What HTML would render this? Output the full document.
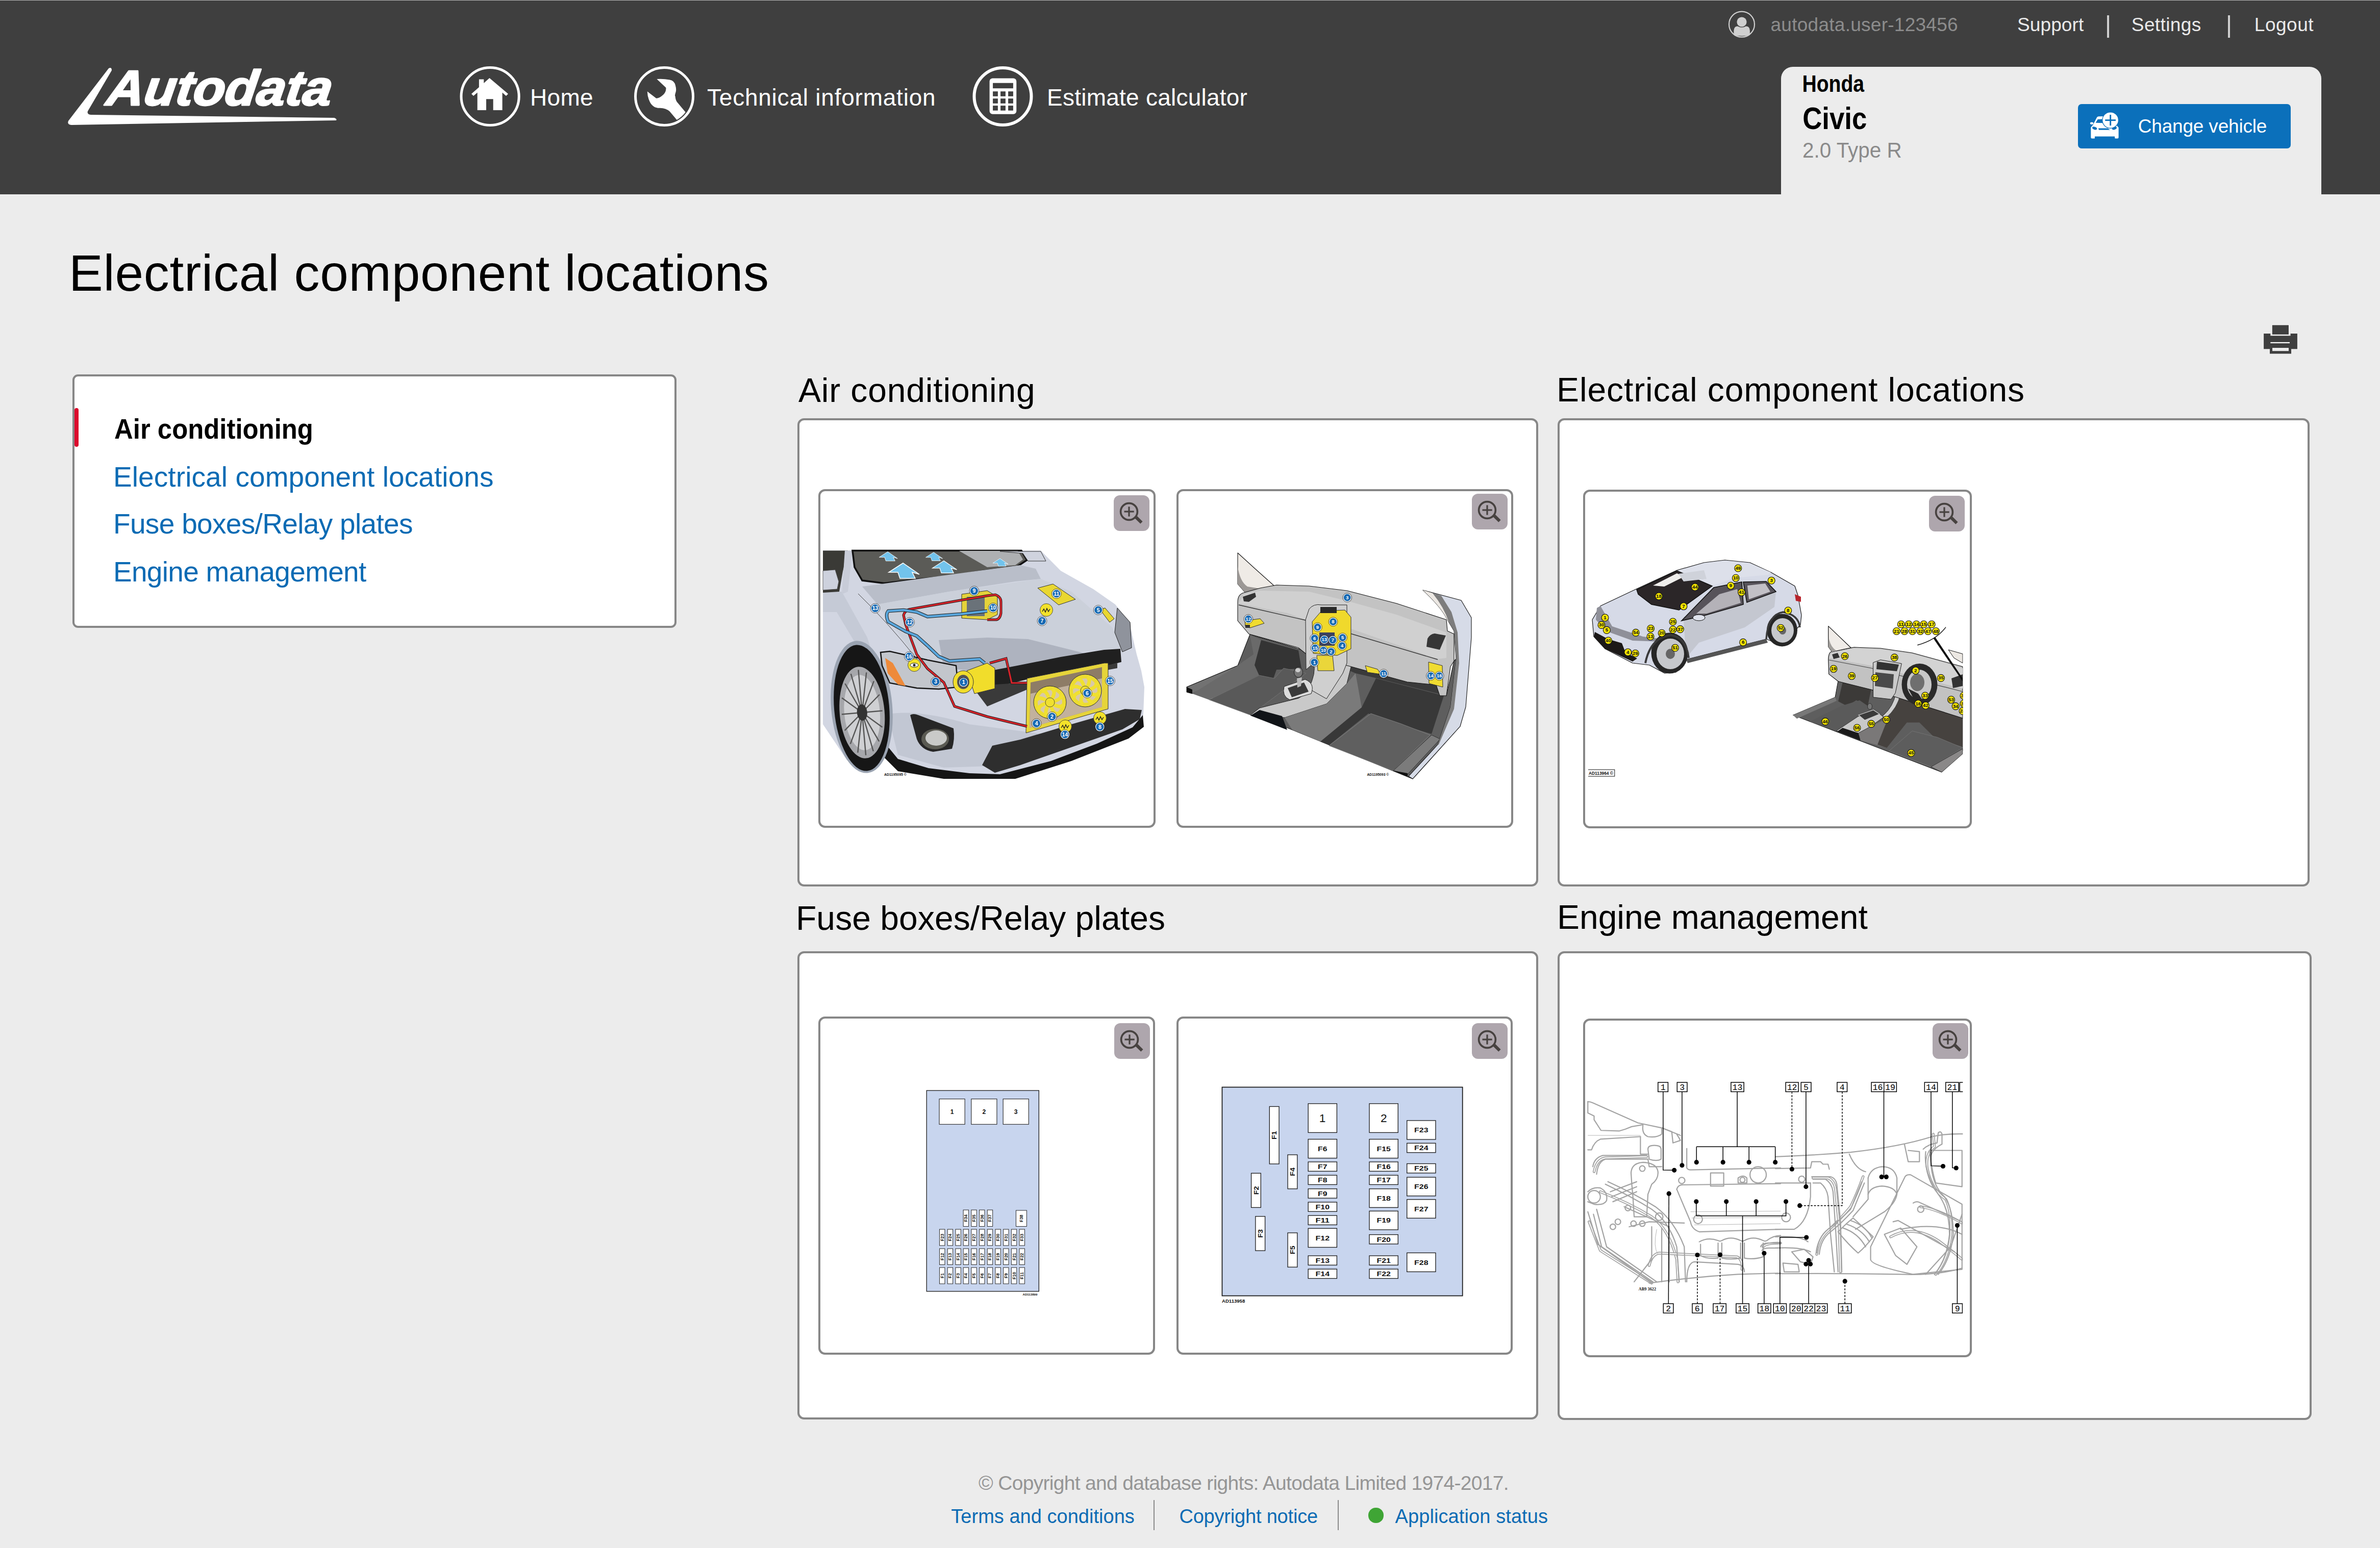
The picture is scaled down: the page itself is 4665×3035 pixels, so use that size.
<!DOCTYPE html>
<html><head><meta charset="utf-8"><title>Electrical component locations - Autodata</title>
<style>
html,body{margin:0;padding:0;}
body{width:4665px;height:3035px;position:relative;overflow:hidden;background:#ececec;font-family:"Liberation Sans",sans-serif;}
.t{position:absolute;white-space:nowrap;line-height:1;}
.abs{position:absolute;}
header{position:absolute;left:0;top:0;width:4665px;height:381px;background:#3f3f3f;border-top:1px solid #b8b8b8;box-sizing:border-box;}
.frm{position:absolute;box-sizing:border-box;border:4.5px solid #878787;border-radius:13px;background:#fff;}
.card{position:absolute;box-sizing:border-box;border:4.5px solid #878787;border-radius:13px;background:#fff;}
.zb{position:absolute;width:70px;height:70px;border-radius:12px;background:#aea6ad;}
.zb svg{display:block}
</style></head><body>
<header></header>
<svg class="abs" style="left:0;top:0" width="700" height="260" viewBox="0 0 700 260">
<path d="M213 134 Q219 131 219 138 L172 218 Q170 224 178 225 L655 231 Q661 233 659 236 L140 245 Q131 244 134 237 Z" fill="#fff"/>
<text x="206" y="206" font-family="Liberation Sans" font-weight="700" font-style="italic" font-size="97" fill="#fff" stroke="#fff" stroke-width="3" stroke-linejoin="round" transform="translate(206 206) skewX(-8) scale(1.05 1) translate(-206 -206)">Autodata</text>
</svg>
<svg class="abs" style="left:880px;top:110px" width="1200" height="160" viewBox="880 110 1200 160">
<circle cx="960.6" cy="189" r="56.6" fill="none" stroke="#fff" stroke-width="5"/>
<path d="M959.4 153 L996 184 L992 188 L984.6 181.5 L984.6 216 L966.7 216 L966.7 194.2 L953 194.2 L953 216 L935.7 216 L935.7 181.5 L928 188 L924 184 L938.9 171 L938.9 155.6 L948.3 155.6 L948.3 163 Z" fill="#fff"/>
<circle cx="1302" cy="189" r="56.5" fill="none" stroke="#fff" stroke-width="5"/>
<path d="M1287.4 155 Q1300 154 1312.7 156.5 Q1322 158 1324 168 Q1326 175 1324.6 180.3 Q1322 188 1323.5 188.5 Q1324 196 1327 200 L1343.7 220 Q1337 229 1326.6 235 L1312.7 218.5 Q1305 212 1294 211.8 Q1286 212 1281.7 209 Q1276 205 1273.4 199 Q1269 190 1268.8 179.2 L1286.3 192.7 Q1292 193 1300.3 185.4 Q1306 180 1305.4 172 Z" fill="#fff"/>
<circle cx="1965.5" cy="189" r="56" fill="none" stroke="#fff" stroke-width="6"/>
<rect x="1939.6" y="153.4" width="52.7" height="70.3" rx="6" fill="#fff"/>
<rect x="1946.1" y="162.7" width="39.8" height="10.5" fill="#3f3f3f"/>
<rect x="1946.1" y="179.2" width="9.8" height="9.6" fill="#3f3f3f"/><rect x="1946.1" y="193.2" width="9.8" height="9.6" fill="#3f3f3f"/><rect x="1946.1" y="207.1" width="9.8" height="9.6" fill="#3f3f3f"/><rect x="1961.1" y="179.2" width="9.8" height="9.6" fill="#3f3f3f"/><rect x="1961.1" y="193.2" width="9.8" height="9.6" fill="#3f3f3f"/><rect x="1961.1" y="207.1" width="9.8" height="9.6" fill="#3f3f3f"/><rect x="1976.1" y="179.2" width="9.8" height="9.6" fill="#3f3f3f"/><rect x="1976.1" y="193.2" width="9.8" height="9.6" fill="#3f3f3f"/><rect x="1976.1" y="207.1" width="9.8" height="9.6" fill="#3f3f3f"/>
</svg>
<svg class="abs" style="left:3380px;top:15px" width="70" height="70" viewBox="3380 15 70 70">
<circle cx="3414" cy="47.7" r="25" fill="none" stroke="#cfcfcf" stroke-width="2.2"/>
<circle cx="3414" cy="43" r="9.6" fill="#cfcfcf"/>
<path d="M3398.4 68.8 L3398.4 60 Q3399 51 3406 51.5 Q3414 56 3422 51.5 Q3429.5 51 3429.9 60 L3429.9 68.8 Q3414 72 3398.4 68.8 Z" fill="#cfcfcf"/>
</svg>
<div class="abs" style="left:4130px;top:30px;width:4px;height:44px;background:#cfcfcf"></div>
<div class="abs" style="left:4367px;top:30px;width:4px;height:44px;background:#cfcfcf"></div>
<div class="abs" style="left:3491px;top:131px;width:1059px;height:250px;background:#ececec;border-radius:23px 23px 0 0"></div>
<div class="abs" style="left:4072.5px;top:204.4px;width:417.8px;height:86.9px;background:#0b70bb;border-radius:7px"></div>
<svg class="abs" style="left:4090px;top:215px" width="70" height="62" viewBox="4090 215 70 62">
<path d="M4098.3 250 L4102.6 244.4 L4110.3 229.8 Q4111.5 228.3 4113.5 228.3 L4124 228 L4140 240 L4149.2 246.2 L4152.6 250 L4152.6 269.5 Q4152.6 271.5 4150.5 271.5 L4145.5 271.5 L4145 267.4 L4106 267.4 L4105.8 271.5 L4100.3 271.5 Q4098.3 271.5 4098.3 269.5 Z" fill="#fff"/>
<ellipse cx="4100" cy="241.7" rx="3.2" ry="2.2" fill="#fff"/>
<path d="M4107.6 240.8 L4111.7 234 L4123 233.5 L4123 241.2 Z" fill="#0b70bb"/>
<ellipse cx="4105.6" cy="251.4" rx="4.8" ry="2.7" transform="rotate(20 4105.6 251.4)" fill="#0b70bb"/>
<ellipse cx="4144.4" cy="251.4" rx="4.8" ry="2.7" transform="rotate(-20 4144.4 251.4)" fill="#0b70bb"/>
<path d="M4113 251.6 L4131 251.6 L4136 254.8 L4114 254.8 Z" fill="#0b70bb"/>
<circle cx="4136.6" cy="235.6" r="16.4" fill="#0b70bb"/>
<circle cx="4136.6" cy="235.6" r="15.2" fill="#fff"/>
<rect x="4126.2" y="234.2" width="20.8" height="2.9" fill="#0b70bb"/><rect x="4135.2" y="225" width="2.9" height="21.2" fill="#0b70bb"/>
</svg>
<svg class="abs" style="left:4430px;top:630px" width="80" height="70" viewBox="4430 630 80 70">
<rect x="4452.7" y="636.4" width="34.3" height="20.4" fill="#fff"/>
<rect x="4453.7" y="637.4" width="32.3" height="18.4" fill="#3f3f3f"/>
<path d="M4437.1 653.9 L4450.3 653.9 L4450.3 658.3 L4489.6 658.3 L4489.6 653.9 L4502.9 653.9 L4502.9 684.3 L4491 684.3 L4491 693.5 L4449 693.5 L4449 684.3 L4437.1 684.3 Z" fill="#3f3f3f"/>
<rect x="4450.3" y="670.8" width="37.7" height="2.2" fill="#fff"/>
<rect x="4454" y="682" width="32" height="6.2" fill="#ececec"/>
</svg>
<aside class="abs" style="left:142px;top:734.4px;width:1184px;height:497px;box-sizing:border-box;border:4px solid #878787;border-radius:11px;background:#fff"></aside>
<div class="abs" style="left:145.6px;top:799.5px;width:8.7px;height:76.8px;background:#dc0a2d;border-radius:4.5px"></div>
<section class="card" style="left:1563px;top:820.3px;width:1452.0px;height:917.7px"></section>
<section class="card" style="left:3053px;top:820.3px;width:1474.0px;height:918.2px"></section>
<section class="card" style="left:1563px;top:1865px;width:1451.5px;height:918.2px"></section>
<section class="card" style="left:3053px;top:1865px;width:1477.5px;height:919.2px"></section>
<div class="frm" style="left:1604.2px;top:959.3px;width:660.5px;height:663.5px"></div>
<svg class="abs" style="left:1600px;top:955px" width="670" height="675" viewBox="1600 955 670 675"><defs><clipPath id="c1600_955"><rect x="1609" y="964" width="651" height="654"/></clipPath></defs><g clip-path="url(#c1600_955)"><path d="M1613 1079.6 L2040 1079.6 L2079 1119 L2143 1155 L2186 1185 L2213 1219 L2228 1283 L2237 1315 L2243 1347 L2241 1400 L2238 1420 L2210 1445 L2100 1490 L1990 1526 L1850 1526 L1760 1510 L1733 1480 L1700 1500 L1660 1490 L1613 1420 Z" fill="#d2d6e2"/><path d="M1740 1400 Q1800 1390 1900 1420 L2050 1440 L2000 1500 L1850 1505 L1760 1480 Z" fill="#c2c7d3"/><path d="M1613 1160 L1650 1160 L1700 1250 L1740 1380 L1733 1460 L1700 1300 L1640 1200 L1613 1200 Z" fill="#c5cad6"/><path d="M1613 1079.6 L1662 1079.6 L1652 1120 L1645 1160 L1613 1162 Z" fill="#3a3a36"/><path d="M1613 1119 L1637 1117 L1644 1140 L1641 1155 L1613 1157 Z" fill="#cdd1dd" stroke="#444" stroke-width="0.8"/><path d="M1656 1079.6 L1671 1079.6 L1662 1160 L1650 1165 Z" fill="#c8ccd8"/><path d="M1671 1079.6 L2002 1079.6 L2013 1098 L1994 1110.5 L1930 1119 L1861 1129.7 L1797 1136 L1733 1143.5 L1690 1138 L1675 1112 Z" fill="#5b5b57" stroke="#111" stroke-width="3.5"/><path d="M1880 1080 L1995 1080 L2005 1097 L1990 1108 L1935 1112 Z" fill="#aeb0b2"/><path d="M1960 1081 L2040 1081 L2050 1100 L2015 1100 L2005 1085 Z" fill="#cfd3de" stroke="#333" stroke-width="1"/><path transform="translate(1770 1106) scale(1.0)" d="M0 -2 L-28 16 L-10 16 L-6 28 L24 28 L18 16 L32 20 Z" fill="#72c3ec" stroke="#fff" stroke-width="1.5"/><path transform="translate(1740 1083) scale(0.6)" d="M0 -2 L-28 16 L-10 16 L-6 28 L24 28 L18 16 L32 20 Z" fill="#72c3ec" stroke="#fff" stroke-width="1.5"/><path transform="translate(1830 1084) scale(0.55)" d="M0 -2 L-28 16 L-10 16 L-6 28 L24 28 L18 16 L32 20 Z" fill="#72c3ec" stroke="#fff" stroke-width="1.5"/><path transform="translate(1850 1101) scale(0.8)" d="M0 -2 L-28 16 L-10 16 L-6 28 L24 28 L18 16 L32 20 Z" fill="#72c3ec" stroke="#fff" stroke-width="1.5"/><path transform="translate(1960 1096) scale(0.5)" d="M0 -2 L-28 16 L-10 16 L-6 28 L24 28 L18 16 L32 20 Z" fill="#72c3ec" stroke="#fff" stroke-width="1.5"/><path d="M1690 1150 L2000 1108 L2030 1115 L2040 1135 L1990 1140 L1860 1160 L1720 1185 Z" fill="#b9bec9"/><path d="M1720 1185 L1860 1160 L2040 1135 L2100 1160 L2180 1230 L2200 1270 L2100 1280 L2000 1300 L1900 1300 L1800 1295 Z" fill="#cbd0da"/><path d="M1840 1255 L1935 1250 L2015 1253 L2143 1285 L2080 1300 L1960 1320 L1850 1310 Z" fill="#aeb3bf"/><path d="M2190 1192 L2215 1220 L2218 1270 L2200 1278 L2185 1240 Z" fill="#8f939c" stroke="#222" stroke-width="1"/><path d="M1905 1322 L1994 1305 L2079 1288 L2164 1274 L2196 1272 L2198 1298 L2171 1305 L2079 1318 L2013 1332 L1940 1350 L1905 1345 Z" fill="#202020"/><path d="M1905 1345 L2013 1338 L2100 1320 L2190 1300 L2190 1310 L2080 1330 L2013 1352 L1935 1385 Z" fill="#3a3a3a"/><path d="M1925 1500 L1945 1462 L2000 1450 L2100 1420 L2205 1390 L2238 1392 L2234 1410 L2200 1430 L2100 1465 L2000 1500 L1950 1515 Z" fill="#2e2e2e"/><path d="M1733 1455 L1760 1488 L1820 1506 L1900 1516 L1960 1518 L2060 1492 L2150 1458 L2220 1426 L2240 1402 L2242 1425 L2212 1448 L2100 1492 L1990 1527 L1850 1527 L1760 1512 L1728 1480 Z" fill="#151515"/><path d="M1784 1402 Q1790 1398 1800 1402 L1869 1428 Q1872 1450 1866 1468 L1829 1474 Q1805 1470 1797 1449 Z" fill="#262626"/><ellipse cx="1833" cy="1449" rx="27" ry="20" fill="#5a5a52"/><ellipse cx="1835" cy="1447" rx="21" ry="15" fill="#c9cac8"/><ellipse cx="1689" cy="1386" rx="60" ry="130" transform="rotate(-5 1689 1386)" fill="#9aa3b1"/><g transform="rotate(-5 1689 1388)"><ellipse cx="1689" cy="1388" rx="54" ry="124" fill="#161616"/><ellipse cx="1689" cy="1397" rx="44" ry="90" fill="#a6a7ab"/><ellipse cx="1689" cy="1397" rx="35" ry="74" fill="#cfd0d3"/><line x1="1689" y1="1397" x2="1729.0" y2="1397.0" stroke="#555" stroke-width="2.4"/><line x1="1689" y1="1397" x2="1726.0" y2="1429.1" stroke="#555" stroke-width="2.4"/><line x1="1689" y1="1397" x2="1717.3" y2="1456.4" stroke="#555" stroke-width="2.4"/><line x1="1689" y1="1397" x2="1704.3" y2="1474.6" stroke="#555" stroke-width="2.4"/><line x1="1689" y1="1397" x2="1689.0" y2="1481.0" stroke="#555" stroke-width="2.4"/><line x1="1689" y1="1397" x2="1673.7" y2="1474.6" stroke="#555" stroke-width="2.4"/><line x1="1689" y1="1397" x2="1660.7" y2="1456.4" stroke="#555" stroke-width="2.4"/><line x1="1689" y1="1397" x2="1652.0" y2="1429.1" stroke="#555" stroke-width="2.4"/><line x1="1689" y1="1397" x2="1649.0" y2="1397.0" stroke="#555" stroke-width="2.4"/><line x1="1689" y1="1397" x2="1652.0" y2="1364.9" stroke="#555" stroke-width="2.4"/><line x1="1689" y1="1397" x2="1660.7" y2="1337.6" stroke="#555" stroke-width="2.4"/><line x1="1689" y1="1397" x2="1673.7" y2="1319.4" stroke="#555" stroke-width="2.4"/><line x1="1689" y1="1397" x2="1689.0" y2="1313.0" stroke="#555" stroke-width="2.4"/><line x1="1689" y1="1397" x2="1704.3" y2="1319.4" stroke="#555" stroke-width="2.4"/><line x1="1689" y1="1397" x2="1717.3" y2="1337.6" stroke="#555" stroke-width="2.4"/><line x1="1689" y1="1397" x2="1726.0" y2="1364.9" stroke="#555" stroke-width="2.4"/><ellipse cx="1689" cy="1397" rx="10" ry="16" fill="#333"/></g><path d="M1726 1279 L1744 1277 L1818 1294 L1874 1305 L1878 1347 L1840 1351 L1797 1349 L1744 1339 L1729 1305 Z" fill="#c3c6cc" stroke="#161616" stroke-width="2.5"/><path d="M1735 1290 L1750 1300 L1775 1345 L1760 1342 L1740 1320 Z" fill="#ee8a3a"/><path d="M1682 1164 Q1740 1220 1797 1292" fill="none" stroke="#444" stroke-width="1"/><path d="M2013 1330 L2164.5 1300 L2172 1300 L2172 1390 L2164.5 1392 L2011 1437 Z" fill="#e6d43a" stroke="#333" stroke-width="1"/><path d="M2020 1338 L2160 1308 L2160 1386 L2018 1427 Z" fill="#8e7c66"/><path d="M2020 1360 L2160 1330 L2160 1386 L2018 1427 Z" fill="#d9c7b5" opacity="0.7"/><circle cx="2058" cy="1377" r="32" fill="#ecdc30" stroke="#333" stroke-width="1"/><circle cx="2058" cy="1377" r="24" fill="#d8c9a8"/><path d="M2058 1377 Q2072 1355 2062 1351" transform="rotate(0 2058 1377)" fill="none" stroke="#f0e030" stroke-width="7"/><path d="M2058 1377 Q2072 1355 2062 1351" transform="rotate(45 2058 1377)" fill="none" stroke="#f0e030" stroke-width="7"/><path d="M2058 1377 Q2072 1355 2062 1351" transform="rotate(90 2058 1377)" fill="none" stroke="#f0e030" stroke-width="7"/><path d="M2058 1377 Q2072 1355 2062 1351" transform="rotate(135 2058 1377)" fill="none" stroke="#f0e030" stroke-width="7"/><path d="M2058 1377 Q2072 1355 2062 1351" transform="rotate(180 2058 1377)" fill="none" stroke="#f0e030" stroke-width="7"/><path d="M2058 1377 Q2072 1355 2062 1351" transform="rotate(225 2058 1377)" fill="none" stroke="#f0e030" stroke-width="7"/><path d="M2058 1377 Q2072 1355 2062 1351" transform="rotate(270 2058 1377)" fill="none" stroke="#f0e030" stroke-width="7"/><path d="M2058 1377 Q2072 1355 2062 1351" transform="rotate(315 2058 1377)" fill="none" stroke="#f0e030" stroke-width="7"/><circle cx="2058" cy="1377" r="9" fill="#f0e030" stroke="#333" stroke-width="0.8"/><circle cx="2127" cy="1354" r="32" fill="#ecdc30" stroke="#333" stroke-width="1"/><circle cx="2127" cy="1354" r="24" fill="#d8c9a8"/><path d="M2127 1354 Q2141 1332 2131 1328" transform="rotate(0 2127 1354)" fill="none" stroke="#f0e030" stroke-width="7"/><path d="M2127 1354 Q2141 1332 2131 1328" transform="rotate(45 2127 1354)" fill="none" stroke="#f0e030" stroke-width="7"/><path d="M2127 1354 Q2141 1332 2131 1328" transform="rotate(90 2127 1354)" fill="none" stroke="#f0e030" stroke-width="7"/><path d="M2127 1354 Q2141 1332 2131 1328" transform="rotate(135 2127 1354)" fill="none" stroke="#f0e030" stroke-width="7"/><path d="M2127 1354 Q2141 1332 2131 1328" transform="rotate(180 2127 1354)" fill="none" stroke="#f0e030" stroke-width="7"/><path d="M2127 1354 Q2141 1332 2131 1328" transform="rotate(225 2127 1354)" fill="none" stroke="#f0e030" stroke-width="7"/><path d="M2127 1354 Q2141 1332 2131 1328" transform="rotate(270 2127 1354)" fill="none" stroke="#f0e030" stroke-width="7"/><path d="M2127 1354 Q2141 1332 2131 1328" transform="rotate(315 2127 1354)" fill="none" stroke="#f0e030" stroke-width="7"/><circle cx="2127" cy="1354" r="9" fill="#f0e030" stroke="#333" stroke-width="0.8"/><path d="M1895 1315 L1935 1300 L1950 1310 L1950 1350 L1910 1360 Z" fill="#f1dd2b" stroke="#333" stroke-width="1"/><ellipse cx="1888" cy="1337" rx="20" ry="22" fill="#f1dd2b" stroke="#333" stroke-width="1"/><ellipse cx="1888" cy="1337" rx="12" ry="14" fill="#555"/><path d="M1885 1165 L1935 1158 L1955 1170 L1955 1205 L1935 1215 L1885 1212 Z" fill="#e4d23a" stroke="#333" stroke-width="1"/><rect x="1895" y="1170" width="35" height="38" fill="#4b5a8a" opacity="0.8"/><path d="M2034 1153 L2064 1145 L2108 1175 L2075 1186 Z" fill="#e9d731" stroke="#333" stroke-width="1"/><path d="M2156 1195 L2166 1192 L2184 1213 L2175 1220 Z" fill="#e9d731" stroke="#333" stroke-width="1"/><path d="M2013 1424 L1935 1405 L1871 1385 L1850 1338 L1818 1311 L1797 1283 L1775 1224 L1771 1206 Q1775 1195 1786 1194 L1882 1177 L1935 1168 L1951 1166 Q1962 1170 1962 1180 L1962 1202 Q1960 1215 1951 1215 L1935 1215" fill="none" stroke="#1a1a1a" stroke-width="5"/><path d="M2013 1424 L1935 1405 L1871 1385 L1850 1338 L1818 1311 L1797 1283 L1775 1224 L1771 1206 Q1775 1195 1786 1194 L1882 1177 L1935 1168 L1951 1166 Q1962 1170 1962 1180 L1962 1202 Q1960 1215 1951 1215 L1935 1215" fill="none" stroke="#d9232a" stroke-width="3.2"/><path d="M1940 1300 L1972 1291 L1983 1339 L2013 1339" fill="none" stroke="#1a1a1a" stroke-width="5"/><path d="M1940 1300 L1972 1291 L1983 1339 L2013 1339" fill="none" stroke="#d9232a" stroke-width="3.2"/><path d="M1935 1198 L1882 1204 L1818 1209 L1797 1200 L1771 1196 L1741 1198 Q1735 1205 1741 1219 L1775 1238 L1797 1247 L1818 1266 L1840 1287 L1861 1296 L1920 1292 L1930 1300" fill="none" stroke="#1a1a1a" stroke-width="6.5"/><path d="M1935 1198 L1882 1204 L1818 1209 L1797 1200 L1771 1196 L1741 1198 Q1735 1205 1741 1219 L1775 1238 L1797 1247 L1818 1266 L1840 1287 L1861 1296 L1920 1292 L1930 1300" fill="none" stroke="#5aa7dd" stroke-width="4.5"/><circle cx="2051" cy="1196" r="12.5" fill="#f3e22a" stroke="#333" stroke-width="0.8"/><path d="M2043 1199 l3 -5 l3 6 l3 -7 l3 6 l3 -5" fill="none" stroke="#222" stroke-width="1.4"/><circle cx="2088" cy="1424" r="12.5" fill="#f3e22a" stroke="#333" stroke-width="0.8"/><path d="M2080 1427 l3 -5 l3 6 l3 -7 l3 6 l3 -5" fill="none" stroke="#222" stroke-width="1.4"/><circle cx="2156" cy="1408" r="12.5" fill="#f3e22a" stroke="#333" stroke-width="0.8"/><path d="M2148 1411 l3 -5 l3 6 l3 -7 l3 6 l3 -5" fill="none" stroke="#222" stroke-width="1.4"/><circle cx="1792" cy="1304" r="12.5" fill="#f3e22a" stroke="#333" stroke-width="0.8"/><ellipse cx="1792" cy="1304" rx="8" ry="4" fill="#fff" stroke="#222" stroke-width="1"/><circle cx="1792" cy="1304" r="2.5" fill="#222"/><circle cx="1909.5" cy="1158.6" r="8.2" fill="#1769b3" stroke="#fff" stroke-width="1.2"/><circle cx="1909.5" cy="1158.6" r="9.399999999999999" fill="none" stroke="#222" stroke-width="0.7"/><text x="1909.5" y="1162.3799999999999" text-anchor="middle" font-family="Liberation Sans" font-weight="700" font-size="10.5" fill="#fff">9</text><circle cx="1946.6" cy="1191.7" r="8.2" fill="#1769b3" stroke="#fff" stroke-width="1.2"/><circle cx="1946.6" cy="1191.7" r="9.399999999999999" fill="none" stroke="#222" stroke-width="0.7"/><text x="1946.6" y="1195.48" text-anchor="middle" font-family="Liberation Sans" font-weight="700" font-size="10.5" fill="#fff">10</text><circle cx="2070.8" cy="1164" r="8.2" fill="#1769b3" stroke="#fff" stroke-width="1.2"/><circle cx="2070.8" cy="1164" r="9.399999999999999" fill="none" stroke="#222" stroke-width="0.7"/><text x="2070.8" y="1167.78" text-anchor="middle" font-family="Liberation Sans" font-weight="700" font-size="10.5" fill="#fff">11</text><circle cx="1715.5" cy="1192.6" r="8.2" fill="#1769b3" stroke="#fff" stroke-width="1.2"/><circle cx="1715.5" cy="1192.6" r="9.399999999999999" fill="none" stroke="#222" stroke-width="0.7"/><text x="1715.5" y="1196.3799999999999" text-anchor="middle" font-family="Liberation Sans" font-weight="700" font-size="10.5" fill="#fff">13</text><circle cx="1783" cy="1220" r="8.2" fill="#1769b3" stroke="#fff" stroke-width="1.2"/><circle cx="1783" cy="1220" r="9.399999999999999" fill="none" stroke="#222" stroke-width="0.7"/><text x="1783" y="1223.78" text-anchor="middle" font-family="Liberation Sans" font-weight="700" font-size="10.5" fill="#fff">12</text><circle cx="2042.5" cy="1217.4" r="8.2" fill="#1769b3" stroke="#fff" stroke-width="1.2"/><circle cx="2042.5" cy="1217.4" r="9.399999999999999" fill="none" stroke="#222" stroke-width="0.7"/><text x="2042.5" y="1221.18" text-anchor="middle" font-family="Liberation Sans" font-weight="700" font-size="10.5" fill="#fff">7</text><circle cx="2152.7" cy="1196" r="8.2" fill="#1769b3" stroke="#fff" stroke-width="1.2"/><circle cx="2152.7" cy="1196" r="9.399999999999999" fill="none" stroke="#222" stroke-width="0.7"/><text x="2152.7" y="1199.78" text-anchor="middle" font-family="Liberation Sans" font-weight="700" font-size="10.5" fill="#fff">5</text><circle cx="1782" cy="1287" r="8.2" fill="#1769b3" stroke="#fff" stroke-width="1.2"/><circle cx="1782" cy="1287" r="9.399999999999999" fill="none" stroke="#222" stroke-width="0.7"/><text x="1782" y="1290.78" text-anchor="middle" font-family="Liberation Sans" font-weight="700" font-size="10.5" fill="#fff">16</text><circle cx="1834" cy="1336.4" r="8.2" fill="#1769b3" stroke="#fff" stroke-width="1.2"/><circle cx="1834" cy="1336.4" r="9.399999999999999" fill="none" stroke="#222" stroke-width="0.7"/><text x="1834" y="1340.18" text-anchor="middle" font-family="Liberation Sans" font-weight="700" font-size="10.5" fill="#fff">3</text><circle cx="1888.6" cy="1337.7" r="8.2" fill="#1769b3" stroke="#fff" stroke-width="1.2"/><circle cx="1888.6" cy="1337.7" r="9.399999999999999" fill="none" stroke="#222" stroke-width="0.7"/><text x="1888.6" y="1341.48" text-anchor="middle" font-family="Liberation Sans" font-weight="700" font-size="10.5" fill="#fff">1</text><circle cx="2176" cy="1335" r="8.2" fill="#1769b3" stroke="#fff" stroke-width="1.2"/><circle cx="2176" cy="1335" r="9.399999999999999" fill="none" stroke="#222" stroke-width="0.7"/><text x="2176" y="1338.78" text-anchor="middle" font-family="Liberation Sans" font-weight="700" font-size="10.5" fill="#fff">15</text><circle cx="2131" cy="1359" r="8.2" fill="#1769b3" stroke="#fff" stroke-width="1.2"/><circle cx="2131" cy="1359" r="9.399999999999999" fill="none" stroke="#222" stroke-width="0.7"/><text x="2131" y="1362.78" text-anchor="middle" font-family="Liberation Sans" font-weight="700" font-size="10.5" fill="#fff">6</text><circle cx="2062" cy="1405" r="8.2" fill="#1769b3" stroke="#fff" stroke-width="1.2"/><circle cx="2062" cy="1405" r="9.399999999999999" fill="none" stroke="#222" stroke-width="0.7"/><text x="2062" y="1408.78" text-anchor="middle" font-family="Liberation Sans" font-weight="700" font-size="10.5" fill="#fff">2</text><circle cx="2031.6" cy="1418.4" r="8.2" fill="#1769b3" stroke="#fff" stroke-width="1.2"/><circle cx="2031.6" cy="1418.4" r="9.399999999999999" fill="none" stroke="#222" stroke-width="0.7"/><text x="2031.6" y="1422.18" text-anchor="middle" font-family="Liberation Sans" font-weight="700" font-size="10.5" fill="#fff">4</text><circle cx="2087.4" cy="1440" r="8.2" fill="#1769b3" stroke="#fff" stroke-width="1.2"/><circle cx="2087.4" cy="1440" r="9.399999999999999" fill="none" stroke="#222" stroke-width="0.7"/><text x="2087.4" y="1443.78" text-anchor="middle" font-family="Liberation Sans" font-weight="700" font-size="10.5" fill="#fff">14</text><circle cx="2155.8" cy="1425" r="8.2" fill="#1769b3" stroke="#fff" stroke-width="1.2"/><circle cx="2155.8" cy="1425" r="9.399999999999999" fill="none" stroke="#222" stroke-width="0.7"/><text x="2155.8" y="1428.78" text-anchor="middle" font-family="Liberation Sans" font-weight="700" font-size="10.5" fill="#fff">8</text><text x="1733" y="1521" font-family="Liberation Sans" font-weight="700" font-size="6.5" fill="#111" textLength="44" lengthAdjust="spacingAndGlyphs">AD1195095 ©</text></g></svg>
<div class="frm" style="left:2305.6px;top:959.3px;width:660.2px;height:663.5px"></div>
<svg class="abs" style="left:2300px;top:955px" width="670" height="675" viewBox="2300 955 670 675"><defs><clipPath id="c2300_955"><rect x="2310" y="964" width="651" height="654"/></clipPath></defs><g clip-path="url(#c2300_955)"><path d="M2326 1347 L2426 1305 L2450 1244 L2545 1272 L2758 1337 L2815 1343 L2835 1364 L2850 1296 L2854 1292 L2862 1424 L2769 1527 Z" fill="#5e5e5e" stroke="#161616" stroke-width="1.1" stroke-linejoin="round"/><path d="M2545 1272 L2758 1337 L2815 1343 L2835 1364 L2700 1330 L2657 1320 Z" fill="#3a3a3a"/><path d="M2326 1347 L2426 1305 L2429 1314 L2337 1360 L2326 1357 Z" fill="#727272" stroke="#161616" stroke-width="1"/><path d="M2326 1347 L2337 1352 L2337 1360 L2326 1357 Z" fill="#111"/><path d="M2426 1305 L2438 1296 L2457 1283 L2450 1244 L2472 1255 L2500 1310 L2468 1323 L2370 1372 L2337 1360 Z" fill="#6a6a6a"/><path d="M2472 1255 L2545 1275 L2551 1311 L2502 1313 L2496 1330 L2468 1324 L2459 1304 Z" fill="#343434"/><path d="M2370 1372 L2468 1324 L2498 1330 L2516 1310 L2560 1320 L2451 1402 Z" fill="#595959" stroke="#777" stroke-width="0.8"/><path d="M2451 1402 L2469 1388 L2545 1369 L2617 1325 L2632 1300 L2650 1300 L2640 1340 L2600 1380 L2518 1407 Z" fill="#c9c9c9" stroke="#222" stroke-width="1"/><path d="M2451 1403 L2469 1392 L2513 1404 L2523 1431 Z" fill="#111418"/><path d="M2518 1407 L2600 1380 L2640 1340 L2657 1320 L2669 1387 L2588 1454 L2533 1431 Z" fill="#7a7a7a"/><path d="M2669 1387 L2697 1330 L2830 1364 L2806 1439 L2746 1421 L2682 1399 L2605 1461 L2588 1454 Z" fill="#383838"/><path d="M2605 1462 L2687 1399 L2746 1419 L2803 1441 L2731 1511 Z" fill="#5f5f5f" stroke="#888" stroke-width="0.8"/><path d="M2731 1511 L2806 1441 L2823 1449 L2759 1518 Z" fill="#7b7b7b" stroke="#222" stroke-width="0.8"/><path d="M2731 1511 L2759 1516 L2759 1522 L2769 1527 Z" fill="#111"/><path d="M2789 1157 L2864 1177 L2884 1211 L2884 1250 L2873 1386 L2862 1424 L2769 1527 L2761 1522 L2818 1460 L2843 1386 L2854 1292 L2850 1237 L2837 1215 Q2825 1190 2789 1157 Z" fill="#d6dbe7" stroke="#161616" stroke-width="1.1" stroke-linejoin="round"/><path d="M2789 1157 L2825 1168 L2845 1200 L2857 1240 L2860 1300 L2850 1390 L2820 1460 L2818 1460 L2843 1386 L2854 1292 L2850 1237 L2837 1215 Q2825 1190 2789 1157 Z" fill="#7d7d7d"/><path d="M2789 1157 L2808 1163 Q2830 1190 2840 1220 L2837 1215 Q2825 1190 2789 1157 Z" fill="#ece8e3"/><path d="M2426 1084 L2460 1115 L2498 1149 L2470 1155 L2440 1161 L2426 1145 Z" fill="#efebe6" stroke="#161616" stroke-width="1.1" stroke-linejoin="round"/><path d="M2426 1110 Q2430 1140 2445 1150 L2470 1154 L2440 1161 L2426 1145 Z" fill="#9c9895"/><path d="M2426 1181 Q2426 1165 2438 1162 L2470 1153 L2502 1147 L2566 1149 L2640 1158 L2737 1183 L2835 1215 L2837 1237 L2850 1243 L2850 1296 L2843 1307 L2835 1364 L2822 1364 L2815 1343 L2758 1337 L2641 1305 L2570 1290 L2545 1270 L2448 1243 L2426 1217 Z" fill="#c3c3c3" stroke="#161616" stroke-width="1.1" stroke-linejoin="round"/><path d="M2428 1183 L2523 1202 L2559 1215 L2640 1230 L2818 1292 L2835 1290 L2835 1240 L2737 1205 L2640 1178 L2566 1160 L2470 1158 L2438 1165 Z" fill="#d0d0d0"/><path d="M2428 1186 L2559 1216 L2818 1293" fill="none" stroke="#333" stroke-width="1.4"/><path d="M2436 1170 L2460 1162 L2462 1170 L2448 1180 L2438 1179 Z" fill="#333"/><path d="M2798 1252 Q2803 1243 2812 1242 L2834 1246 L2822 1274 L2796 1268 Z" fill="#363636"/><path d="M2566 1194 Q2575 1183 2590 1186 L2640 1186 L2640 1300 L2632 1320 L2600 1370 L2565 1350 Q2580 1320 2575 1300 L2560 1313 L2559 1215 Z" fill="#cfcfcf" stroke="#222" stroke-width="1"/><path d="M2572 1219 L2590 1198 L2636 1196 L2648 1210 L2648 1272 L2621 1285 L2574 1281 Z" fill="#f0d92c" stroke="#333" stroke-width="1"/><rect x="2588" y="1190" width="32" height="12" fill="#2a2a2a"/><rect x="2586" y="1240" width="30" height="26" fill="#3c4260"/><path d="M2581 1285 L2612 1285 L2615 1315 L2583 1315 Z" fill="#ead63a" stroke="#333" stroke-width="1"/><path d="M2517 1346 L2558 1332 Q2578 1340 2570 1360 L2528 1372 Q2512 1365 2517 1346 Z" fill="#dcdcdc" stroke="#222" stroke-width="1"/><path d="M2524 1349 L2556 1338 L2565 1356 L2532 1367 Z" fill="#3b3b3b"/><path d="M2542 1330 L2552 1328 L2550 1345 L2543 1348 Z" fill="#bbb"/><ellipse cx="2545" cy="1318" rx="8.5" ry="10" fill="#777" stroke="#222" stroke-width="1"/><ellipse cx="2544" cy="1314" rx="5" ry="4" fill="#ccc"/><path d="M2440 1217 L2470 1213 L2478 1222 L2450 1231 L2441 1228 Z" fill="#f0dc30" stroke="#333" stroke-width="1"/><rect x="2441" y="1225" width="9" height="6" fill="#333"/><path d="M2676 1305 L2700 1312 L2707 1322 L2680 1318 Z" fill="#f0dc30" stroke="#333" stroke-width="1"/><path d="M2800 1298 L2827 1305 L2828 1347 L2801 1340 Z" fill="#f0dc30" stroke="#333" stroke-width="1"/><circle cx="2640.7" cy="1171.6" r="7.6" fill="#1769b3" stroke="#fff" stroke-width="1.2"/><circle cx="2640.7" cy="1171.6" r="8.799999999999999" fill="none" stroke="#222" stroke-width="0.7"/><text x="2640.7" y="1175.02" text-anchor="middle" font-family="Liberation Sans" font-weight="700" font-size="9.5" fill="#fff">3</text><circle cx="2446.9" cy="1213.6" r="7.6" fill="#1769b3" stroke="#fff" stroke-width="1.2"/><circle cx="2446.9" cy="1213.6" r="8.799999999999999" fill="none" stroke="#222" stroke-width="0.7"/><text x="2446.9" y="1217.02" text-anchor="middle" font-family="Liberation Sans" font-weight="700" font-size="9.5" fill="#fff">12</text><circle cx="2613" cy="1219" r="7.6" fill="#1769b3" stroke="#fff" stroke-width="1.2"/><circle cx="2613" cy="1219" r="8.799999999999999" fill="none" stroke="#222" stroke-width="0.7"/><text x="2613" y="1222.42" text-anchor="middle" font-family="Liberation Sans" font-weight="700" font-size="9.5" fill="#fff">8</text><circle cx="2582.5" cy="1229.6" r="7.6" fill="#1769b3" stroke="#fff" stroke-width="1.2"/><circle cx="2582.5" cy="1229.6" r="8.799999999999999" fill="none" stroke="#222" stroke-width="0.7"/><text x="2582.5" y="1233.02" text-anchor="middle" font-family="Liberation Sans" font-weight="700" font-size="9.5" fill="#fff">9</text><circle cx="2576.7" cy="1251.5" r="7.6" fill="#1769b3" stroke="#fff" stroke-width="1.2"/><circle cx="2576.7" cy="1251.5" r="8.799999999999999" fill="none" stroke="#222" stroke-width="0.7"/><text x="2576.7" y="1254.92" text-anchor="middle" font-family="Liberation Sans" font-weight="700" font-size="9.5" fill="#fff">6</text><circle cx="2595.8" cy="1254" r="7.6" fill="#1769b3" stroke="#fff" stroke-width="1.2"/><circle cx="2595.8" cy="1254" r="8.799999999999999" fill="none" stroke="#222" stroke-width="0.7"/><text x="2595.8" y="1257.42" text-anchor="middle" font-family="Liberation Sans" font-weight="700" font-size="9.5" fill="#fff">13</text><circle cx="2612.3" cy="1255" r="7.6" fill="#1769b3" stroke="#fff" stroke-width="1.2"/><circle cx="2612.3" cy="1255" r="8.799999999999999" fill="none" stroke="#222" stroke-width="0.7"/><text x="2612.3" y="1258.42" text-anchor="middle" font-family="Liberation Sans" font-weight="700" font-size="9.5" fill="#fff">7</text><circle cx="2631.6" cy="1250" r="7.6" fill="#1769b3" stroke="#fff" stroke-width="1.2"/><circle cx="2631.6" cy="1250" r="8.799999999999999" fill="none" stroke="#222" stroke-width="0.7"/><text x="2631.6" y="1253.42" text-anchor="middle" font-family="Liberation Sans" font-weight="700" font-size="9.5" fill="#fff">5</text><circle cx="2630.6" cy="1266" r="7.6" fill="#1769b3" stroke="#fff" stroke-width="1.2"/><circle cx="2630.6" cy="1266" r="8.799999999999999" fill="none" stroke="#222" stroke-width="0.7"/><text x="2630.6" y="1269.42" text-anchor="middle" font-family="Liberation Sans" font-weight="700" font-size="9.5" fill="#fff">4</text><circle cx="2577.8" cy="1270.6" r="7.6" fill="#1769b3" stroke="#fff" stroke-width="1.2"/><circle cx="2577.8" cy="1270.6" r="8.799999999999999" fill="none" stroke="#222" stroke-width="0.7"/><text x="2577.8" y="1274.02" text-anchor="middle" font-family="Liberation Sans" font-weight="700" font-size="9.5" fill="#fff">15</text><circle cx="2594" cy="1275" r="7.6" fill="#1769b3" stroke="#fff" stroke-width="1.2"/><circle cx="2594" cy="1275" r="8.799999999999999" fill="none" stroke="#222" stroke-width="0.7"/><text x="2594" y="1278.42" text-anchor="middle" font-family="Liberation Sans" font-weight="700" font-size="9.5" fill="#fff">10</text><circle cx="2609" cy="1277.5" r="7.6" fill="#1769b3" stroke="#fff" stroke-width="1.2"/><circle cx="2609" cy="1277.5" r="8.799999999999999" fill="none" stroke="#222" stroke-width="0.7"/><text x="2609" y="1280.92" text-anchor="middle" font-family="Liberation Sans" font-weight="700" font-size="9.5" fill="#fff">2</text><circle cx="2576.3" cy="1298.5" r="7.6" fill="#1769b3" stroke="#fff" stroke-width="1.2"/><circle cx="2576.3" cy="1298.5" r="8.799999999999999" fill="none" stroke="#222" stroke-width="0.7"/><text x="2576.3" y="1301.92" text-anchor="middle" font-family="Liberation Sans" font-weight="700" font-size="9.5" fill="#fff">1</text><circle cx="2712" cy="1320.8" r="7.6" fill="#1769b3" stroke="#fff" stroke-width="1.2"/><circle cx="2712" cy="1320.8" r="8.799999999999999" fill="none" stroke="#222" stroke-width="0.7"/><text x="2712" y="1324.22" text-anchor="middle" font-family="Liberation Sans" font-weight="700" font-size="9.5" fill="#fff">11</text><circle cx="2804.4" cy="1325" r="7.6" fill="#1769b3" stroke="#fff" stroke-width="1.2"/><circle cx="2804.4" cy="1325" r="8.799999999999999" fill="none" stroke="#222" stroke-width="0.7"/><text x="2804.4" y="1328.42" text-anchor="middle" font-family="Liberation Sans" font-weight="700" font-size="9.5" fill="#fff">14</text><circle cx="2821.2" cy="1325" r="7.6" fill="#1769b3" stroke="#fff" stroke-width="1.2"/><circle cx="2821.2" cy="1325" r="8.799999999999999" fill="none" stroke="#222" stroke-width="0.7"/><text x="2821.2" y="1328.42" text-anchor="middle" font-family="Liberation Sans" font-weight="700" font-size="9.5" fill="#fff">16</text><text x="2679.4" y="1521.4" font-family="Liberation Sans" font-weight="700" font-size="6.5" fill="#111" textLength="43" lengthAdjust="spacingAndGlyphs">AD1195093 ©</text></g></svg>
<div class="frm" style="left:3103px;top:959.5px;width:762.0px;height:664.9px"></div>
<svg class="abs" style="left:3095px;top:955px" width="775" height="675" viewBox="3095 955 775 675"><defs><clipPath id="c3095_955"><rect x="3113" y="964" width="734.5" height="656"/></clipPath></defs><g clip-path="url(#c3095_955)"><path d="M3121 1215 L3137 1188 L3209 1154 L3287 1118 L3340 1103 L3381 1098 L3430 1103 L3471 1122 L3518 1149 L3524 1167 L3531 1206 L3529 1225 L3515 1240 L3490 1264 L3462 1253 L3305 1293 L3285 1318 L3263 1320 L3233 1304 L3200 1300 L3146 1272 L3124 1248 Z" fill="#d6dae7" stroke="#161616" stroke-width="1.2" stroke-linejoin="round"/><path d="M3287 1119 L3340 1104 L3381 1099 L3430 1104 L3471 1122 L3465 1127 L3400 1133 L3356 1149 Z" fill="#dde0ea"/><path d="M3300 1217 L3360 1152 L3414 1141 L3462 1140 L3481 1160 L3478 1190 L3420 1230 L3330 1260 L3305 1290 Z" fill="#c4c7d0"/><path d="M3208 1156 L3287 1119 L3356 1149 L3291 1196 L3237 1185 L3211 1165 Z" fill="#2b2628" stroke="#111" stroke-width="1.5"/><path d="M3240 1148 L3287 1124 L3300 1131 L3262 1150 Z" fill="#efeeec"/><path d="M3290 1125 L3340 1118 L3345 1135 L3300 1140 Z" fill="#cfd2da"/><path d="M3296 1217 L3359 1152 L3414 1141 L3417 1185 L3340 1207 Z" fill="#57535a" stroke="#111" stroke-width="1.6"/><path d="M3325 1203 L3370 1165 L3405 1155 L3412 1182 L3345 1203 Z" fill="#b4b2b8"/><path d="M3417 1141 L3462 1140 L3481 1160 L3424 1181 Z" fill="#57535a" stroke="#111" stroke-width="1.6"/><path d="M3425 1148 L3460 1144 L3470 1160 L3428 1175 Z" fill="#c2c0c6"/><ellipse cx="3330" cy="1211" rx="12" ry="6" fill="#dfe2ec" stroke="#111" stroke-width="1"/><path d="M3305 1293 L3462 1253 L3465 1260 L3308 1300 Z" fill="#555"/><path d="M3124 1248 L3146 1272 L3200 1297 L3209 1291 L3186 1279 L3179 1261 L3152 1253 L3126 1239 Z" fill="#1b1817"/><path d="M3130 1192 L3137 1188 L3160 1228 L3220 1248 L3250 1252 L3255 1258 L3200 1256 L3150 1238 L3128 1215 Z" fill="#8f9099"/><ellipse cx="3272.6" cy="1280.5" rx="36" ry="40" fill="#262626"/><ellipse cx="3274" cy="1282" rx="27" ry="30" fill="#c6c8cc"/><ellipse cx="3274" cy="1282" rx="9" ry="10" fill="#666"/><path d="M3225 1300 Q3235 1250 3275 1245 Q3305 1250 3310 1290" fill="none" stroke="#3a3a3a" stroke-width="4"/><ellipse cx="3493" cy="1235.4" rx="30" ry="32" fill="#262626"/><ellipse cx="3494" cy="1236" rx="22" ry="24" fill="#c6c8cc"/><ellipse cx="3494" cy="1236" rx="7" ry="8" fill="#666"/><path d="M3462 1253 Q3465 1205 3495 1200 Q3525 1205 3528 1230" fill="none" stroke="#3a3a3a" stroke-width="3.5"/><path d="M3518 1165 L3530 1170 L3530 1180 L3520 1178 Z" fill="#b8242c"/><circle cx="3146" cy="1211" r="7.0" fill="#f2e300" stroke="#111" stroke-width="1.1"/><text x="3146" y="1214.096" text-anchor="middle" font-family="Liberation Sans" font-weight="700" font-size="8.6" fill="#111" textLength="5.4" lengthAdjust="spacingAndGlyphs">1</text><circle cx="3139" cy="1225.4" r="7.0" fill="#f2e300" stroke="#111" stroke-width="1.1"/><text x="3139" y="1228.496" text-anchor="middle" font-family="Liberation Sans" font-weight="700" font-size="8.6" fill="#111" textLength="10.8" lengthAdjust="spacingAndGlyphs">30</text><circle cx="3149.4" cy="1235.4" r="7.0" fill="#f2e300" stroke="#111" stroke-width="1.1"/><text x="3149.4" y="1238.496" text-anchor="middle" font-family="Liberation Sans" font-weight="700" font-size="8.6" fill="#111" textLength="5.4" lengthAdjust="spacingAndGlyphs">5</text><circle cx="3152.5" cy="1256" r="7.0" fill="#f2e300" stroke="#111" stroke-width="1.1"/><text x="3152.5" y="1259.096" text-anchor="middle" font-family="Liberation Sans" font-weight="700" font-size="8.6" fill="#111" textLength="10.8" lengthAdjust="spacingAndGlyphs">40</text><circle cx="3206.3" cy="1240.4" r="7.0" fill="#f2e300" stroke="#111" stroke-width="1.1"/><text x="3206.3" y="1243.496" text-anchor="middle" font-family="Liberation Sans" font-weight="700" font-size="8.6" fill="#111" textLength="10.8" lengthAdjust="spacingAndGlyphs">54</text><circle cx="3235.6" cy="1232.3" r="7.0" fill="#f2e300" stroke="#111" stroke-width="1.1"/><text x="3235.6" y="1235.396" text-anchor="middle" font-family="Liberation Sans" font-weight="700" font-size="8.6" fill="#111" textLength="10.8" lengthAdjust="spacingAndGlyphs">23</text><circle cx="3235" cy="1248" r="7.0" fill="#f2e300" stroke="#111" stroke-width="1.1"/><text x="3235" y="1251.096" text-anchor="middle" font-family="Liberation Sans" font-weight="700" font-size="8.6" fill="#111" textLength="10.8" lengthAdjust="spacingAndGlyphs">13</text><circle cx="3257.2" cy="1241.3" r="7.0" fill="#f2e300" stroke="#111" stroke-width="1.1"/><text x="3257.2" y="1244.396" text-anchor="middle" font-family="Liberation Sans" font-weight="700" font-size="8.6" fill="#111" textLength="10.8" lengthAdjust="spacingAndGlyphs">20</text><circle cx="3279" cy="1219" r="7.0" fill="#f2e300" stroke="#111" stroke-width="1.1"/><text x="3279" y="1222.096" text-anchor="middle" font-family="Liberation Sans" font-weight="700" font-size="8.6" fill="#111" textLength="10.8" lengthAdjust="spacingAndGlyphs">25</text><circle cx="3279" cy="1234.5" r="7.0" fill="#f2e300" stroke="#111" stroke-width="1.1"/><text x="3279" y="1237.596" text-anchor="middle" font-family="Liberation Sans" font-weight="700" font-size="8.6" fill="#111" textLength="10.8" lengthAdjust="spacingAndGlyphs">22</text><circle cx="3293.4" cy="1233.6" r="7.0" fill="#f2e300" stroke="#111" stroke-width="1.1"/><text x="3293.4" y="1236.696" text-anchor="middle" font-family="Liberation Sans" font-weight="700" font-size="8.6" fill="#111" textLength="10.8" lengthAdjust="spacingAndGlyphs">37</text><circle cx="3190.8" cy="1278.7" r="7.0" fill="#f2e300" stroke="#111" stroke-width="1.1"/><text x="3190.8" y="1281.796" text-anchor="middle" font-family="Liberation Sans" font-weight="700" font-size="8.6" fill="#111" textLength="5.4" lengthAdjust="spacingAndGlyphs">4</text><circle cx="3205.4" cy="1281" r="7.0" fill="#f2e300" stroke="#111" stroke-width="1.1"/><text x="3205.4" y="1284.096" text-anchor="middle" font-family="Liberation Sans" font-weight="700" font-size="8.6" fill="#111" textLength="10.8" lengthAdjust="spacingAndGlyphs">29</text><circle cx="3283.4" cy="1270.2" r="7.0" fill="#f2e300" stroke="#111" stroke-width="1.1"/><text x="3283.4" y="1273.296" text-anchor="middle" font-family="Liberation Sans" font-weight="700" font-size="8.6" fill="#111" textLength="10.8" lengthAdjust="spacingAndGlyphs">51</text><circle cx="3416.6" cy="1259.4" r="7.0" fill="#f2e300" stroke="#111" stroke-width="1.1"/><text x="3416.6" y="1262.496" text-anchor="middle" font-family="Liberation Sans" font-weight="700" font-size="8.6" fill="#111" textLength="5.4" lengthAdjust="spacingAndGlyphs">6</text><circle cx="3490.3" cy="1231.2" r="7.0" fill="#f2e300" stroke="#111" stroke-width="1.1"/><text x="3490.3" y="1234.296" text-anchor="middle" font-family="Liberation Sans" font-weight="700" font-size="8.6" fill="#111" textLength="10.8" lengthAdjust="spacingAndGlyphs">52</text><circle cx="3504.8" cy="1197" r="7.0" fill="#f2e300" stroke="#111" stroke-width="1.1"/><text x="3504.8" y="1200.096" text-anchor="middle" font-family="Liberation Sans" font-weight="700" font-size="8.6" fill="#111" textLength="5.4" lengthAdjust="spacingAndGlyphs">8</text><circle cx="3251.5" cy="1169" r="7.0" fill="#f2e300" stroke="#111" stroke-width="1.1"/><text x="3251.5" y="1172.096" text-anchor="middle" font-family="Liberation Sans" font-weight="700" font-size="8.6" fill="#111" textLength="10.8" lengthAdjust="spacingAndGlyphs">18</text><circle cx="3300" cy="1188.8" r="7.0" fill="#f2e300" stroke="#111" stroke-width="1.1"/><text x="3300" y="1191.896" text-anchor="middle" font-family="Liberation Sans" font-weight="700" font-size="8.6" fill="#111" textLength="5.4" lengthAdjust="spacingAndGlyphs">7</text><circle cx="3322.3" cy="1151" r="7.0" fill="#f2e300" stroke="#111" stroke-width="1.1"/><text x="3322.3" y="1154.096" text-anchor="middle" font-family="Liberation Sans" font-weight="700" font-size="8.6" fill="#111" textLength="10.8" lengthAdjust="spacingAndGlyphs">44</text><circle cx="3392.4" cy="1148.3" r="7.0" fill="#f2e300" stroke="#111" stroke-width="1.1"/><text x="3392.4" y="1151.396" text-anchor="middle" font-family="Liberation Sans" font-weight="700" font-size="8.6" fill="#111" textLength="5.4" lengthAdjust="spacingAndGlyphs">9</text><circle cx="3413.5" cy="1161.3" r="7.0" fill="#f2e300" stroke="#111" stroke-width="1.1"/><text x="3413.5" y="1164.396" text-anchor="middle" font-family="Liberation Sans" font-weight="700" font-size="8.6" fill="#111" textLength="10.8" lengthAdjust="spacingAndGlyphs">41</text><circle cx="3402.3" cy="1133.3" r="7.0" fill="#f2e300" stroke="#111" stroke-width="1.1"/><text x="3402.3" y="1136.396" text-anchor="middle" font-family="Liberation Sans" font-weight="700" font-size="8.6" fill="#111" textLength="10.8" lengthAdjust="spacingAndGlyphs">10</text><circle cx="3406.8" cy="1114" r="7.0" fill="#f2e300" stroke="#111" stroke-width="1.1"/><text x="3406.8" y="1117.096" text-anchor="middle" font-family="Liberation Sans" font-weight="700" font-size="8.6" fill="#111" textLength="10.8" lengthAdjust="spacingAndGlyphs">49</text><circle cx="3472.2" cy="1138.2" r="7.0" fill="#f2e300" stroke="#111" stroke-width="1.1"/><text x="3472.2" y="1141.296" text-anchor="middle" font-family="Liberation Sans" font-weight="700" font-size="8.6" fill="#111" textLength="5.4" lengthAdjust="spacingAndGlyphs">3</text><path d="M3514.5 1402 L3597 1367 L3603 1334 L3667 1352 L3717 1367 L3847 1408 L3847 1472 L3806 1514 Z" fill="#5e5e5e" stroke="#161616" stroke-width="1" stroke-linejoin="round"/><path d="M3514.5 1402 L3597 1367 L3600 1374 L3522 1409 Z" fill="#787878"/><path d="M3611.6 1338 L3667.4 1352.6 L3661 1384 L3638.5 1373 L3620 1384 L3603 1375 Z" fill="#3c3a38"/><path d="M3547 1415 L3609 1384 L3645 1373 L3661 1384 L3690 1398 L3599 1433 Z" fill="#5a5a5a"/><path d="M3642.6 1437.3 L3665.3 1425 L3706.7 1404.3 L3737 1367 L3780 1390 L3762 1417 L3737.6 1416.7 L3698.4 1466.3 L3646.7 1451.8 Z" fill="#7a7878"/><path d="M3717 1367 L3847 1408.4 L3847 1464.2 L3793.4 1447.6 L3762.5 1416.7 L3737.6 1416.7 L3698.4 1466.3 L3680 1460 Z" fill="#46423f"/><path d="M3702.5 1472.5 L3748 1433.2 L3797.6 1445.6 L3847 1466.3 L3785 1503.5 Z" fill="#5d5d5d" stroke="#777" stroke-width="0.8"/><path d="M3785 1503.5 L3847 1468 L3847 1478 L3806 1514 Z" fill="#8a8888" stroke="#222" stroke-width="0.8"/><path d="M3599.2 1433.2 L3642.6 1404.3 L3681.9 1398 L3692 1406 L3665.3 1425 L3642.6 1437.3 Z" fill="#c9c9c9" stroke="#222" stroke-width="0.8"/><path d="M3716 1358 Q3712 1385 3690 1404 L3696 1408 Q3720 1388 3725 1360 Z" fill="#d0d0d0" stroke="#222" stroke-width="0.8"/><path d="M3643 1402 L3672 1392 L3684 1400 L3655 1412 Z" fill="#3a3a3a" stroke="#ccc" stroke-width="1.2"/><ellipse cx="3665" cy="1385" rx="4.5" ry="6" fill="#777" stroke="#222" stroke-width="0.8"/><path d="M3601.3 1434.2 L3611.6 1427 L3642.6 1437.3 L3646.7 1451.8 Z" fill="#1a1a1a"/><path d="M3583.7 1292.7 Q3584 1280 3589 1278 L3634 1269 L3686 1271 L3748 1280 L3810 1297 L3847 1307 L3847 1408 L3717 1367 L3667.4 1352 L3603.3 1336 L3584.7 1321.6 Z" fill="#c2c2c2" stroke="#161616" stroke-width="1.2" stroke-linejoin="round"/><path d="M3585 1290 L3667 1305 L3847 1350 L3847 1310 L3810 1299 L3748 1282 L3686 1273 L3634 1271 L3590 1280 Z" fill="#d3d3d3"/><path d="M3585 1294 L3668 1310 L3847 1356" fill="none" stroke="#444" stroke-width="1.2"/><path d="M3591 1283 L3602 1280 L3606 1289 L3594 1292 Z" fill="#333"/><path d="M3671.5 1299 L3686 1293.7 L3727.3 1301 L3715 1358.8 L3706.7 1371 L3671.5 1367 Z" fill="#cacaca" stroke="#222" stroke-width="1"/><path d="M3679 1297 L3722 1303 L3718 1316 L3678 1312 Z" fill="#333"/><path d="M3676 1318 L3712 1322 L3710 1350 L3675 1345 Z" fill="#4a4a4a"/><ellipse cx="3762.5" cy="1342" rx="35" ry="41" fill="#2a2a2a"/><ellipse cx="3762" cy="1342" rx="24" ry="29" fill="#c8c8c8"/><ellipse cx="3758" cy="1338" rx="14" ry="17" fill="#6f6f6f"/><path d="M3740 1350 L3760 1360 L3770 1375 L3752 1372 Z" fill="#2a2a2a"/><path d="M3825 1330 L3847 1322 L3847 1345 L3828 1349 Z" fill="#333"/><path d="M3583.7 1227.6 L3628 1270 L3591 1278 L3583.7 1268 Z" fill="#f0ece8" stroke="#161616" stroke-width="1.2" stroke-linejoin="round"/><path d="M3584 1245 Q3586 1268 3600 1276 L3591 1278 L3583.7 1268 Z" fill="#a19e9b"/><path d="M3819 1274 L3847 1282 L3847 1300 L3830 1290 Z" fill="#ece8e3" stroke="#161616" stroke-width="1"/><path d="M3758.3 1264.8 Q3795 1255 3814 1229.6" fill="none" stroke="#111" stroke-width="1.4"/><path d="M3789.3 1251.3 L3793 1249 L3847 1330 L3847 1336 Z" fill="#111"/><circle cx="3726.3" cy="1224" r="7.0" fill="#f2e300" stroke="#111" stroke-width="1.1"/><text x="3726.3" y="1227.096" text-anchor="middle" font-family="Liberation Sans" font-weight="700" font-size="8.6" fill="#111" textLength="10.8" lengthAdjust="spacingAndGlyphs">11</text><circle cx="3741.2" cy="1224" r="7.0" fill="#f2e300" stroke="#111" stroke-width="1.1"/><text x="3741.2" y="1227.096" text-anchor="middle" font-family="Liberation Sans" font-weight="700" font-size="8.6" fill="#111" textLength="10.8" lengthAdjust="spacingAndGlyphs">12</text><circle cx="3756.3" cy="1224" r="7.0" fill="#f2e300" stroke="#111" stroke-width="1.1"/><text x="3756.3" y="1227.096" text-anchor="middle" font-family="Liberation Sans" font-weight="700" font-size="8.6" fill="#111" textLength="10.8" lengthAdjust="spacingAndGlyphs">14</text><circle cx="3770.7" cy="1224" r="7.0" fill="#f2e300" stroke="#111" stroke-width="1.1"/><text x="3770.7" y="1227.096" text-anchor="middle" font-family="Liberation Sans" font-weight="700" font-size="8.6" fill="#111" textLength="10.8" lengthAdjust="spacingAndGlyphs">15</text><circle cx="3786.2" cy="1224" r="7.0" fill="#f2e300" stroke="#111" stroke-width="1.1"/><text x="3786.2" y="1227.096" text-anchor="middle" font-family="Liberation Sans" font-weight="700" font-size="8.6" fill="#111" textLength="10.8" lengthAdjust="spacingAndGlyphs">17</text><circle cx="3717.4" cy="1237.5" r="7.0" fill="#f2e300" stroke="#111" stroke-width="1.1"/><text x="3717.4" y="1240.596" text-anchor="middle" font-family="Liberation Sans" font-weight="700" font-size="8.6" fill="#111" textLength="10.8" lengthAdjust="spacingAndGlyphs">21</text><circle cx="3733" cy="1237.5" r="7.0" fill="#f2e300" stroke="#111" stroke-width="1.1"/><text x="3733" y="1240.596" text-anchor="middle" font-family="Liberation Sans" font-weight="700" font-size="8.6" fill="#111" textLength="10.8" lengthAdjust="spacingAndGlyphs">28</text><circle cx="3748.6" cy="1237.5" r="7.0" fill="#f2e300" stroke="#111" stroke-width="1.1"/><text x="3748.6" y="1240.596" text-anchor="middle" font-family="Liberation Sans" font-weight="700" font-size="8.6" fill="#111" textLength="10.8" lengthAdjust="spacingAndGlyphs">31</text><circle cx="3764" cy="1237.5" r="7.0" fill="#f2e300" stroke="#111" stroke-width="1.1"/><text x="3764" y="1240.596" text-anchor="middle" font-family="Liberation Sans" font-weight="700" font-size="8.6" fill="#111" textLength="10.8" lengthAdjust="spacingAndGlyphs">32</text><circle cx="3779" cy="1237.5" r="7.0" fill="#f2e300" stroke="#111" stroke-width="1.1"/><text x="3779" y="1240.596" text-anchor="middle" font-family="Liberation Sans" font-weight="700" font-size="8.6" fill="#111" textLength="10.8" lengthAdjust="spacingAndGlyphs">47</text><circle cx="3794.5" cy="1237.5" r="7.0" fill="#f2e300" stroke="#111" stroke-width="1.1"/><text x="3794.5" y="1240.596" text-anchor="middle" font-family="Liberation Sans" font-weight="700" font-size="8.6" fill="#111" textLength="10.8" lengthAdjust="spacingAndGlyphs">48</text><circle cx="3616.1" cy="1286.5" r="7.0" fill="#f2e300" stroke="#111" stroke-width="1.1"/><text x="3616.1" y="1289.596" text-anchor="middle" font-family="Liberation Sans" font-weight="700" font-size="8.6" fill="#111" textLength="10.8" lengthAdjust="spacingAndGlyphs">26</text><circle cx="3713.3" cy="1289.1" r="7.0" fill="#f2e300" stroke="#111" stroke-width="1.1"/><text x="3713.3" y="1292.196" text-anchor="middle" font-family="Liberation Sans" font-weight="700" font-size="8.6" fill="#111" textLength="10.8" lengthAdjust="spacingAndGlyphs">38</text><circle cx="3594" cy="1311.3" r="7.0" fill="#f2e300" stroke="#111" stroke-width="1.1"/><text x="3594" y="1314.396" text-anchor="middle" font-family="Liberation Sans" font-weight="700" font-size="8.6" fill="#111" textLength="10.8" lengthAdjust="spacingAndGlyphs">19</text><circle cx="3629.6" cy="1325.3" r="7.0" fill="#f2e300" stroke="#111" stroke-width="1.1"/><text x="3629.6" y="1328.396" text-anchor="middle" font-family="Liberation Sans" font-weight="700" font-size="8.6" fill="#111" textLength="10.8" lengthAdjust="spacingAndGlyphs">39</text><circle cx="3675" cy="1329.2" r="7.0" fill="#f2e300" stroke="#111" stroke-width="1.1"/><text x="3675" y="1332.296" text-anchor="middle" font-family="Liberation Sans" font-weight="700" font-size="8.6" fill="#111" textLength="10.8" lengthAdjust="spacingAndGlyphs">27</text><circle cx="3754.8" cy="1314.8" r="7.0" fill="#f2e300" stroke="#111" stroke-width="1.1"/><text x="3754.8" y="1317.896" text-anchor="middle" font-family="Liberation Sans" font-weight="700" font-size="8.6" fill="#111" textLength="5.4" lengthAdjust="spacingAndGlyphs">2</text><circle cx="3804.4" cy="1329.4" r="7.0" fill="#f2e300" stroke="#111" stroke-width="1.1"/><text x="3804.4" y="1332.496" text-anchor="middle" font-family="Liberation Sans" font-weight="700" font-size="8.6" fill="#111" textLength="10.8" lengthAdjust="spacingAndGlyphs">35</text><circle cx="3773.4" cy="1364" r="7.0" fill="#f2e300" stroke="#111" stroke-width="1.1"/><text x="3773.4" y="1367.096" text-anchor="middle" font-family="Liberation Sans" font-weight="700" font-size="8.6" fill="#111" textLength="10.8" lengthAdjust="spacingAndGlyphs">33</text><circle cx="3824.5" cy="1371.8" r="7.0" fill="#f2e300" stroke="#111" stroke-width="1.1"/><text x="3824.5" y="1374.896" text-anchor="middle" font-family="Liberation Sans" font-weight="700" font-size="8.6" fill="#111" textLength="10.8" lengthAdjust="spacingAndGlyphs">53</text><circle cx="3759.8" cy="1379.5" r="7.0" fill="#f2e300" stroke="#111" stroke-width="1.1"/><text x="3759.8" y="1382.596" text-anchor="middle" font-family="Liberation Sans" font-weight="700" font-size="8.6" fill="#111" textLength="10.8" lengthAdjust="spacingAndGlyphs">16</text><circle cx="3774.4" cy="1383.2" r="7.0" fill="#f2e300" stroke="#111" stroke-width="1.1"/><text x="3774.4" y="1386.296" text-anchor="middle" font-family="Liberation Sans" font-weight="700" font-size="8.6" fill="#111" textLength="10.8" lengthAdjust="spacingAndGlyphs">42</text><circle cx="3833.1" cy="1384.6" r="7.0" fill="#f2e300" stroke="#111" stroke-width="1.1"/><text x="3833.1" y="1387.696" text-anchor="middle" font-family="Liberation Sans" font-weight="700" font-size="8.6" fill="#111" textLength="10.8" lengthAdjust="spacingAndGlyphs">34</text><circle cx="3577.7" cy="1414.6" r="7.0" fill="#f2e300" stroke="#111" stroke-width="1.1"/><text x="3577.7" y="1417.696" text-anchor="middle" font-family="Liberation Sans" font-weight="700" font-size="8.6" fill="#111" textLength="10.8" lengthAdjust="spacingAndGlyphs">46</text><circle cx="3640" cy="1427" r="7.0" fill="#f2e300" stroke="#111" stroke-width="1.1"/><text x="3640" y="1430.096" text-anchor="middle" font-family="Liberation Sans" font-weight="700" font-size="8.6" fill="#111" textLength="10.8" lengthAdjust="spacingAndGlyphs">56</text><circle cx="3667.8" cy="1419.1" r="7.0" fill="#f2e300" stroke="#111" stroke-width="1.1"/><text x="3667.8" y="1422.196" text-anchor="middle" font-family="Liberation Sans" font-weight="700" font-size="8.6" fill="#111" textLength="10.8" lengthAdjust="spacingAndGlyphs">55</text><circle cx="3697.4" cy="1411" r="7.0" fill="#f2e300" stroke="#111" stroke-width="1.1"/><text x="3697.4" y="1414.096" text-anchor="middle" font-family="Liberation Sans" font-weight="700" font-size="8.6" fill="#111" textLength="10.8" lengthAdjust="spacingAndGlyphs">50</text><circle cx="3746" cy="1476.2" r="7.0" fill="#f2e300" stroke="#111" stroke-width="1.1"/><text x="3746" y="1479.296" text-anchor="middle" font-family="Liberation Sans" font-weight="700" font-size="8.6" fill="#111" textLength="10.8" lengthAdjust="spacingAndGlyphs">45</text><circle cx="3849" cy="1364" r="7.0" fill="#f2e300" stroke="#111" stroke-width="1.1"/><text x="3849" y="1367.096" text-anchor="middle" font-family="Liberation Sans" font-weight="700" font-size="8.6" fill="#111" textLength="10.8" lengthAdjust="spacingAndGlyphs">36</text><circle cx="3849" cy="1379.5" r="7.0" fill="#f2e300" stroke="#111" stroke-width="1.1"/><text x="3849" y="1382.596" text-anchor="middle" font-family="Liberation Sans" font-weight="700" font-size="8.6" fill="#111" textLength="10.8" lengthAdjust="spacingAndGlyphs">37</text><circle cx="3847" cy="1394" r="7.0" fill="#f2e300" stroke="#111" stroke-width="1.1"/><text x="3847" y="1397.096" text-anchor="middle" font-family="Liberation Sans" font-weight="700" font-size="8.6" fill="#111" textLength="10.8" lengthAdjust="spacingAndGlyphs">24</text><rect x="3112.4" y="1509" width="52.4" height="13" fill="#fff" stroke="#111" stroke-width="1"/><text x="3114" y="1519" font-family="Liberation Sans" font-weight="700" font-size="8.5" fill="#111" textLength="48" lengthAdjust="spacingAndGlyphs">AD113964 ©</text></g></svg>
<div class="frm" style="left:1604px;top:1992.7px;width:659.5px;height:663.3px"></div>
<svg class="abs" style="left:1600px;top:1985px" width="670" height="675" viewBox="0 0 1537 1548" preserveAspectRatio="none"><rect x="496" y="351" width="505" height="903" fill="#c8d5ee" stroke="#1a1a1a" stroke-width="3"/><rect x="553" y="389" width="115" height="114" fill="#fff" stroke="#222" stroke-width="2.5"/><text x="610.5" y="456" text-anchor="middle" font-family="Liberation Sans" font-weight="700" font-size="28" fill="#111">1</text><rect x="697" y="389" width="115" height="114" fill="#fff" stroke="#222" stroke-width="2.5"/><text x="754.5" y="456" text-anchor="middle" font-family="Liberation Sans" font-weight="700" font-size="28" fill="#111">2</text><rect x="840" y="389" width="115" height="114" fill="#fff" stroke="#222" stroke-width="2.5"/><text x="897.5" y="456" text-anchor="middle" font-family="Liberation Sans" font-weight="700" font-size="28" fill="#111">3</text><rect x="661" y="888" width="24" height="74" fill="#fff" stroke="#222" stroke-width="2.2"/><text x="680.0" y="925.0" transform="rotate(-90 680.0 925.0)" text-anchor="middle" font-family="Liberation Sans" font-weight="700" font-size="19" fill="#111">F34</text><rect x="697" y="888" width="24" height="74" fill="#fff" stroke="#222" stroke-width="2.2"/><text x="716.0" y="925.0" transform="rotate(-90 716.0 925.0)" text-anchor="middle" font-family="Liberation Sans" font-weight="700" font-size="19" fill="#111">F35</text><rect x="733" y="888" width="24" height="74" fill="#fff" stroke="#222" stroke-width="2.2"/><text x="752.0" y="925.0" transform="rotate(-90 752.0 925.0)" text-anchor="middle" font-family="Liberation Sans" font-weight="700" font-size="19" fill="#111">F36</text><rect x="769" y="888" width="24" height="74" fill="#fff" stroke="#222" stroke-width="2.2"/><text x="788.0" y="925.0" transform="rotate(-90 788.0 925.0)" text-anchor="middle" font-family="Liberation Sans" font-weight="700" font-size="19" fill="#111">F37</text><rect x="898" y="890" width="48" height="72" fill="#fff" stroke="#222" stroke-width="2.2"/><text x="929.0" y="926.0" transform="rotate(-90 929.0 926.0)" text-anchor="middle" font-family="Liberation Sans" font-weight="700" font-size="19" fill="#111">F38</text><rect x="554" y="975" width="24" height="73" fill="#fff" stroke="#222" stroke-width="2.2"/><text x="573.0" y="1011.5" transform="rotate(-90 573.0 1011.5)" text-anchor="middle" font-family="Liberation Sans" font-weight="700" font-size="19" fill="#111">F23</text><rect x="554" y="1062" width="24" height="72" fill="#fff" stroke="#222" stroke-width="2.2"/><text x="573.0" y="1098.0" transform="rotate(-90 573.0 1098.0)" text-anchor="middle" font-family="Liberation Sans" font-weight="700" font-size="19" fill="#111">F12</text><rect x="554" y="1147" width="24" height="73" fill="#fff" stroke="#222" stroke-width="2.2"/><text x="573.0" y="1183.5" transform="rotate(-90 573.0 1183.5)" text-anchor="middle" font-family="Liberation Sans" font-weight="700" font-size="19" fill="#111">F1</text><rect x="590" y="975" width="24" height="73" fill="#fff" stroke="#222" stroke-width="2.2"/><text x="609.0" y="1011.5" transform="rotate(-90 609.0 1011.5)" text-anchor="middle" font-family="Liberation Sans" font-weight="700" font-size="19" fill="#111">F24</text><rect x="590" y="1062" width="24" height="72" fill="#fff" stroke="#222" stroke-width="2.2"/><text x="609.0" y="1098.0" transform="rotate(-90 609.0 1098.0)" text-anchor="middle" font-family="Liberation Sans" font-weight="700" font-size="19" fill="#111">F13</text><rect x="590" y="1147" width="24" height="73" fill="#fff" stroke="#222" stroke-width="2.2"/><text x="609.0" y="1183.5" transform="rotate(-90 609.0 1183.5)" text-anchor="middle" font-family="Liberation Sans" font-weight="700" font-size="19" fill="#111">F2</text><rect x="626" y="975" width="24" height="73" fill="#fff" stroke="#222" stroke-width="2.2"/><text x="645.0" y="1011.5" transform="rotate(-90 645.0 1011.5)" text-anchor="middle" font-family="Liberation Sans" font-weight="700" font-size="19" fill="#111">F25</text><rect x="626" y="1062" width="24" height="72" fill="#fff" stroke="#222" stroke-width="2.2"/><text x="645.0" y="1098.0" transform="rotate(-90 645.0 1098.0)" text-anchor="middle" font-family="Liberation Sans" font-weight="700" font-size="19" fill="#111">F14</text><rect x="626" y="1147" width="24" height="73" fill="#fff" stroke="#222" stroke-width="2.2"/><text x="645.0" y="1183.5" transform="rotate(-90 645.0 1183.5)" text-anchor="middle" font-family="Liberation Sans" font-weight="700" font-size="19" fill="#111">F3</text><rect x="661" y="975" width="24" height="73" fill="#fff" stroke="#222" stroke-width="2.2"/><text x="680.0" y="1011.5" transform="rotate(-90 680.0 1011.5)" text-anchor="middle" font-family="Liberation Sans" font-weight="700" font-size="19" fill="#111">F26</text><rect x="661" y="1062" width="24" height="72" fill="#fff" stroke="#222" stroke-width="2.2"/><text x="680.0" y="1098.0" transform="rotate(-90 680.0 1098.0)" text-anchor="middle" font-family="Liberation Sans" font-weight="700" font-size="19" fill="#111">F15</text><rect x="661" y="1147" width="24" height="73" fill="#fff" stroke="#222" stroke-width="2.2"/><text x="680.0" y="1183.5" transform="rotate(-90 680.0 1183.5)" text-anchor="middle" font-family="Liberation Sans" font-weight="700" font-size="19" fill="#111">F4</text><rect x="697" y="975" width="24" height="73" fill="#fff" stroke="#222" stroke-width="2.2"/><text x="716.0" y="1011.5" transform="rotate(-90 716.0 1011.5)" text-anchor="middle" font-family="Liberation Sans" font-weight="700" font-size="19" fill="#111">F27</text><rect x="697" y="1062" width="24" height="72" fill="#fff" stroke="#222" stroke-width="2.2"/><text x="716.0" y="1098.0" transform="rotate(-90 716.0 1098.0)" text-anchor="middle" font-family="Liberation Sans" font-weight="700" font-size="19" fill="#111">F16</text><rect x="697" y="1147" width="24" height="73" fill="#fff" stroke="#222" stroke-width="2.2"/><text x="716.0" y="1183.5" transform="rotate(-90 716.0 1183.5)" text-anchor="middle" font-family="Liberation Sans" font-weight="700" font-size="19" fill="#111">F5</text><rect x="733" y="975" width="24" height="73" fill="#fff" stroke="#222" stroke-width="2.2"/><text x="752.0" y="1011.5" transform="rotate(-90 752.0 1011.5)" text-anchor="middle" font-family="Liberation Sans" font-weight="700" font-size="19" fill="#111">F28</text><rect x="733" y="1062" width="24" height="72" fill="#fff" stroke="#222" stroke-width="2.2"/><text x="752.0" y="1098.0" transform="rotate(-90 752.0 1098.0)" text-anchor="middle" font-family="Liberation Sans" font-weight="700" font-size="19" fill="#111">F17</text><rect x="733" y="1147" width="24" height="73" fill="#fff" stroke="#222" stroke-width="2.2"/><text x="752.0" y="1183.5" transform="rotate(-90 752.0 1183.5)" text-anchor="middle" font-family="Liberation Sans" font-weight="700" font-size="19" fill="#111">F6</text><rect x="769" y="975" width="24" height="73" fill="#fff" stroke="#222" stroke-width="2.2"/><text x="788.0" y="1011.5" transform="rotate(-90 788.0 1011.5)" text-anchor="middle" font-family="Liberation Sans" font-weight="700" font-size="19" fill="#111">F29</text><rect x="769" y="1062" width="24" height="72" fill="#fff" stroke="#222" stroke-width="2.2"/><text x="788.0" y="1098.0" transform="rotate(-90 788.0 1098.0)" text-anchor="middle" font-family="Liberation Sans" font-weight="700" font-size="19" fill="#111">F18</text><rect x="769" y="1147" width="24" height="73" fill="#fff" stroke="#222" stroke-width="2.2"/><text x="788.0" y="1183.5" transform="rotate(-90 788.0 1183.5)" text-anchor="middle" font-family="Liberation Sans" font-weight="700" font-size="19" fill="#111">F7</text><rect x="805" y="975" width="24" height="73" fill="#fff" stroke="#222" stroke-width="2.2"/><text x="824.0" y="1011.5" transform="rotate(-90 824.0 1011.5)" text-anchor="middle" font-family="Liberation Sans" font-weight="700" font-size="19" fill="#111">F30</text><rect x="805" y="1062" width="24" height="72" fill="#fff" stroke="#222" stroke-width="2.2"/><text x="824.0" y="1098.0" transform="rotate(-90 824.0 1098.0)" text-anchor="middle" font-family="Liberation Sans" font-weight="700" font-size="19" fill="#111">F19</text><rect x="805" y="1147" width="24" height="73" fill="#fff" stroke="#222" stroke-width="2.2"/><text x="824.0" y="1183.5" transform="rotate(-90 824.0 1183.5)" text-anchor="middle" font-family="Liberation Sans" font-weight="700" font-size="19" fill="#111">F8</text><rect x="841" y="975" width="24" height="73" fill="#fff" stroke="#222" stroke-width="2.2"/><text x="860.0" y="1011.5" transform="rotate(-90 860.0 1011.5)" text-anchor="middle" font-family="Liberation Sans" font-weight="700" font-size="19" fill="#111">F31</text><rect x="841" y="1062" width="24" height="72" fill="#fff" stroke="#222" stroke-width="2.2"/><text x="860.0" y="1098.0" transform="rotate(-90 860.0 1098.0)" text-anchor="middle" font-family="Liberation Sans" font-weight="700" font-size="19" fill="#111">F20</text><rect x="841" y="1147" width="24" height="73" fill="#fff" stroke="#222" stroke-width="2.2"/><text x="860.0" y="1183.5" transform="rotate(-90 860.0 1183.5)" text-anchor="middle" font-family="Liberation Sans" font-weight="700" font-size="19" fill="#111">F9</text><rect x="877" y="975" width="24" height="73" fill="#fff" stroke="#222" stroke-width="2.2"/><text x="896.0" y="1011.5" transform="rotate(-90 896.0 1011.5)" text-anchor="middle" font-family="Liberation Sans" font-weight="700" font-size="19" fill="#111">F32</text><rect x="877" y="1062" width="24" height="72" fill="#fff" stroke="#222" stroke-width="2.2"/><text x="896.0" y="1098.0" transform="rotate(-90 896.0 1098.0)" text-anchor="middle" font-family="Liberation Sans" font-weight="700" font-size="19" fill="#111">F21</text><rect x="877" y="1147" width="24" height="73" fill="#fff" stroke="#222" stroke-width="2.2"/><text x="896.0" y="1183.5" transform="rotate(-90 896.0 1183.5)" text-anchor="middle" font-family="Liberation Sans" font-weight="700" font-size="19" fill="#111">F10</text><rect x="913" y="975" width="24" height="73" fill="#fff" stroke="#222" stroke-width="2.2"/><text x="932.0" y="1011.5" transform="rotate(-90 932.0 1011.5)" text-anchor="middle" font-family="Liberation Sans" font-weight="700" font-size="19" fill="#111">F33</text><rect x="913" y="1062" width="24" height="72" fill="#fff" stroke="#222" stroke-width="2.2"/><text x="932.0" y="1098.0" transform="rotate(-90 932.0 1098.0)" text-anchor="middle" font-family="Liberation Sans" font-weight="700" font-size="19" fill="#111">F22</text><rect x="913" y="1147" width="24" height="73" fill="#fff" stroke="#222" stroke-width="2.2"/><text x="932.0" y="1183.5" transform="rotate(-90 932.0 1183.5)" text-anchor="middle" font-family="Liberation Sans" font-weight="700" font-size="19" fill="#111">F11</text><text x="928" y="1273" font-family="Liberation Sans" font-weight="700" font-size="14" fill="#111">AD113899</text></svg>
<div class="frm" style="left:2306px;top:1992.7px;width:659.2px;height:663.3px"></div>
<svg class="abs" style="left:2300px;top:1985px" width="670" height="675" viewBox="0 0 1537 1548" preserveAspectRatio="none"><rect x="219" y="336" width="1081" height="938" fill="#c8d5ee" stroke="#1a1a1a" stroke-width="4"/><rect x="432" y="423" width="43" height="258" fill="#fff" stroke="#1a1a1a" stroke-width="3"/><text x="464.5" y="552.0" transform="rotate(-90 464.5 552.0)" text-anchor="middle" font-family="Liberation Sans" font-weight="700" font-size="31" fill="#111" textLength="38" lengthAdjust="spacingAndGlyphs">F1</text><rect x="350" y="723" width="43" height="154" fill="#fff" stroke="#1a1a1a" stroke-width="3"/><text x="382.5" y="800.0" transform="rotate(-90 382.5 800.0)" text-anchor="middle" font-family="Liberation Sans" font-weight="700" font-size="31" fill="#111" textLength="38" lengthAdjust="spacingAndGlyphs">F2</text><rect x="369" y="917" width="43" height="154" fill="#fff" stroke="#1a1a1a" stroke-width="3"/><text x="401.5" y="994.0" transform="rotate(-90 401.5 994.0)" text-anchor="middle" font-family="Liberation Sans" font-weight="700" font-size="31" fill="#111" textLength="38" lengthAdjust="spacingAndGlyphs">F3</text><rect x="514" y="640" width="43" height="153" fill="#fff" stroke="#1a1a1a" stroke-width="3"/><text x="546.5" y="716.5" transform="rotate(-90 546.5 716.5)" text-anchor="middle" font-family="Liberation Sans" font-weight="700" font-size="31" fill="#111" textLength="38" lengthAdjust="spacingAndGlyphs">F4</text><rect x="514" y="991" width="43" height="154" fill="#fff" stroke="#1a1a1a" stroke-width="3"/><text x="546.5" y="1068.0" transform="rotate(-90 546.5 1068.0)" text-anchor="middle" font-family="Liberation Sans" font-weight="700" font-size="31" fill="#111" textLength="38" lengthAdjust="spacingAndGlyphs">F5</text><rect x="606" y="410" width="129" height="130" fill="#fff" stroke="#1a1a1a" stroke-width="3"/><text x="670" y="492" text-anchor="middle" font-family="Liberation Sans" font-size="52" fill="#111">1</text><rect x="881" y="410" width="129" height="130" fill="#fff" stroke="#1a1a1a" stroke-width="3"/><text x="946" y="492" text-anchor="middle" font-family="Liberation Sans" font-size="52" fill="#111">2</text><rect x="606" y="570" width="129" height="85" fill="#fff" stroke="#1a1a1a" stroke-width="3"/><text x="670.5" y="623.5" text-anchor="middle" font-family="Liberation Sans" font-weight="700" font-size="31" fill="#111" textLength="42" lengthAdjust="spacingAndGlyphs">F6</text><rect x="606" y="672" width="129" height="42" fill="#fff" stroke="#1a1a1a" stroke-width="3"/><text x="670.5" y="704.0" text-anchor="middle" font-family="Liberation Sans" font-weight="700" font-size="31" fill="#111" textLength="42" lengthAdjust="spacingAndGlyphs">F7</text><rect x="606" y="732" width="129" height="42" fill="#fff" stroke="#1a1a1a" stroke-width="3"/><text x="670.5" y="764.0" text-anchor="middle" font-family="Liberation Sans" font-weight="700" font-size="31" fill="#111" textLength="42" lengthAdjust="spacingAndGlyphs">F8</text><rect x="606" y="793" width="129" height="42" fill="#fff" stroke="#1a1a1a" stroke-width="3"/><text x="670.5" y="825.0" text-anchor="middle" font-family="Liberation Sans" font-weight="700" font-size="31" fill="#111" textLength="42" lengthAdjust="spacingAndGlyphs">F9</text><rect x="606" y="853" width="129" height="42" fill="#fff" stroke="#1a1a1a" stroke-width="3"/><text x="670.5" y="885.0" text-anchor="middle" font-family="Liberation Sans" font-weight="700" font-size="31" fill="#111" textLength="63" lengthAdjust="spacingAndGlyphs">F10</text><rect x="606" y="913" width="129" height="42" fill="#fff" stroke="#1a1a1a" stroke-width="3"/><text x="670.5" y="945.0" text-anchor="middle" font-family="Liberation Sans" font-weight="700" font-size="31" fill="#111" textLength="63" lengthAdjust="spacingAndGlyphs">F11</text><rect x="606" y="971" width="129" height="85" fill="#fff" stroke="#1a1a1a" stroke-width="3"/><text x="670.5" y="1024.5" text-anchor="middle" font-family="Liberation Sans" font-weight="700" font-size="31" fill="#111" textLength="63" lengthAdjust="spacingAndGlyphs">F12</text><rect x="606" y="1094" width="129" height="42" fill="#fff" stroke="#1a1a1a" stroke-width="3"/><text x="670.5" y="1126.0" text-anchor="middle" font-family="Liberation Sans" font-weight="700" font-size="31" fill="#111" textLength="63" lengthAdjust="spacingAndGlyphs">F13</text><rect x="606" y="1154" width="129" height="42" fill="#fff" stroke="#1a1a1a" stroke-width="3"/><text x="670.5" y="1186.0" text-anchor="middle" font-family="Liberation Sans" font-weight="700" font-size="31" fill="#111" textLength="63" lengthAdjust="spacingAndGlyphs">F14</text><rect x="881" y="570" width="129" height="85" fill="#fff" stroke="#1a1a1a" stroke-width="3"/><text x="945.5" y="623.5" text-anchor="middle" font-family="Liberation Sans" font-weight="700" font-size="31" fill="#111" textLength="63" lengthAdjust="spacingAndGlyphs">F15</text><rect x="881" y="672" width="129" height="42" fill="#fff" stroke="#1a1a1a" stroke-width="3"/><text x="945.5" y="704.0" text-anchor="middle" font-family="Liberation Sans" font-weight="700" font-size="31" fill="#111" textLength="63" lengthAdjust="spacingAndGlyphs">F16</text><rect x="881" y="732" width="129" height="42" fill="#fff" stroke="#1a1a1a" stroke-width="3"/><text x="945.5" y="764.0" text-anchor="middle" font-family="Liberation Sans" font-weight="700" font-size="31" fill="#111" textLength="63" lengthAdjust="spacingAndGlyphs">F17</text><rect x="881" y="793" width="129" height="84" fill="#fff" stroke="#1a1a1a" stroke-width="3"/><text x="945.5" y="846.0" text-anchor="middle" font-family="Liberation Sans" font-weight="700" font-size="31" fill="#111" textLength="63" lengthAdjust="spacingAndGlyphs">F18</text><rect x="881" y="893" width="129" height="84" fill="#fff" stroke="#1a1a1a" stroke-width="3"/><text x="945.5" y="946.0" text-anchor="middle" font-family="Liberation Sans" font-weight="700" font-size="31" fill="#111" textLength="63" lengthAdjust="spacingAndGlyphs">F19</text><rect x="881" y="999" width="129" height="42" fill="#fff" stroke="#1a1a1a" stroke-width="3"/><text x="945.5" y="1031.0" text-anchor="middle" font-family="Liberation Sans" font-weight="700" font-size="31" fill="#111" textLength="63" lengthAdjust="spacingAndGlyphs">F20</text><rect x="881" y="1094" width="129" height="42" fill="#fff" stroke="#1a1a1a" stroke-width="3"/><text x="945.5" y="1126.0" text-anchor="middle" font-family="Liberation Sans" font-weight="700" font-size="31" fill="#111" textLength="63" lengthAdjust="spacingAndGlyphs">F21</text><rect x="881" y="1154" width="129" height="42" fill="#fff" stroke="#1a1a1a" stroke-width="3"/><text x="945.5" y="1186.0" text-anchor="middle" font-family="Liberation Sans" font-weight="700" font-size="31" fill="#111" textLength="63" lengthAdjust="spacingAndGlyphs">F22</text><rect x="1050" y="486" width="129" height="85" fill="#fff" stroke="#1a1a1a" stroke-width="3"/><text x="1114.5" y="539.5" text-anchor="middle" font-family="Liberation Sans" font-weight="700" font-size="31" fill="#111" textLength="63" lengthAdjust="spacingAndGlyphs">F23</text><rect x="1050" y="588" width="129" height="42" fill="#fff" stroke="#1a1a1a" stroke-width="3"/><text x="1114.5" y="620.0" text-anchor="middle" font-family="Liberation Sans" font-weight="700" font-size="31" fill="#111" textLength="63" lengthAdjust="spacingAndGlyphs">F24</text><rect x="1050" y="680" width="129" height="42" fill="#fff" stroke="#1a1a1a" stroke-width="3"/><text x="1114.5" y="712.0" text-anchor="middle" font-family="Liberation Sans" font-weight="700" font-size="31" fill="#111" textLength="63" lengthAdjust="spacingAndGlyphs">F25</text><rect x="1050" y="741" width="129" height="84" fill="#fff" stroke="#1a1a1a" stroke-width="3"/><text x="1114.5" y="794.0" text-anchor="middle" font-family="Liberation Sans" font-weight="700" font-size="31" fill="#111" textLength="63" lengthAdjust="spacingAndGlyphs">F26</text><rect x="1050" y="841" width="129" height="84" fill="#fff" stroke="#1a1a1a" stroke-width="3"/><text x="1114.5" y="894.0" text-anchor="middle" font-family="Liberation Sans" font-weight="700" font-size="31" fill="#111" textLength="63" lengthAdjust="spacingAndGlyphs">F27</text><rect x="1050" y="1081" width="129" height="85" fill="#fff" stroke="#1a1a1a" stroke-width="3"/><text x="1114.5" y="1134.5" text-anchor="middle" font-family="Liberation Sans" font-weight="700" font-size="31" fill="#111" textLength="63" lengthAdjust="spacingAndGlyphs">F28</text><text x="218" y="1306" font-family="Liberation Sans" font-weight="700" font-size="22" fill="#111">AD113958</text></svg>
<div class="frm" style="left:3103px;top:1997px;width:762.0px;height:664.4px"></div>
<svg class="abs" style="left:3095px;top:1990px" width="775" height="675" viewBox="0 0 1777 1548" preserveAspectRatio="none"><defs><clipPath id="engclip"><rect x="0" y="0" width="1725" height="1548"/></clipPath></defs><g clip-path="url(#engclip)"><g transform="translate(11.5 366.9) scale(0.5628)"><path d="M150 760 Q380 850 560 960 Q700 1060 760 1300 L770 1480" fill="none" stroke="#a3a3a3" stroke-width="22" stroke-linejoin="round" stroke-linecap="round"/><path d="M150 760 Q380 850 560 960 Q700 1060 760 1300 L770 1480" fill="none" stroke="#ffffff" stroke-width="8" stroke-linejoin="round" stroke-linecap="round"/><path d="M100 600 Q120 500 190 490 L520 480" fill="none" stroke="#a3a3a3" stroke-width="22" stroke-linejoin="round" stroke-linecap="round"/><path d="M100 600 Q120 500 190 490 L520 480" fill="none" stroke="#ffffff" stroke-width="8" stroke-linejoin="round" stroke-linecap="round"/><path d="M60 1000 L150 1230 L560 1490" fill="none" stroke="#a3a3a3" stroke-width="22" stroke-linejoin="round" stroke-linecap="round"/><path d="M60 1000 L150 1230 L560 1490" fill="none" stroke="#ffffff" stroke-width="8" stroke-linejoin="round" stroke-linecap="round"/><path d="M540 1350 Q560 1260 620 1250 L1240 1280 Q1290 1300 1280 1380" fill="none" stroke="#a3a3a3" stroke-width="22" stroke-linejoin="round" stroke-linecap="round"/><path d="M540 1350 Q560 1260 620 1250 L1240 1280 Q1290 1300 1280 1380" fill="none" stroke="#ffffff" stroke-width="8" stroke-linejoin="round" stroke-linecap="round"/><path d="M1450 1200 Q1470 1170 1589 1170" fill="none" stroke="#a3a3a3" stroke-width="22" stroke-linejoin="round" stroke-linecap="round"/><path d="M1450 1200 Q1470 1170 1589 1170" fill="none" stroke="#ffffff" stroke-width="8" stroke-linejoin="round" stroke-linecap="round"/><path d="M50 40 L50 130 L100 155 L100 185 L155 270 L300 275 L350 260 L400 240 L460 230 L490 225" fill="none" stroke="#a3a3a3" stroke-width="9" stroke-linejoin="round" stroke-linecap="round"/><path d="M50 40 Q70 40 90 50 L450 210 L640 250 L790 310" fill="none" stroke="#a3a3a3" stroke-width="9" stroke-linejoin="round" stroke-linecap="round"/><path d="M50 425 L80 425 Q100 360 150 340 L470 320" fill="none" stroke="#a3a3a3" stroke-width="9" stroke-linejoin="round" stroke-linecap="round"/><path d="M490 230 Q480 300 530 320 Q600 330 640 300 L640 250 L720 280 L730 370 L790 350 L760 300" fill="none" stroke="#a3a3a3" stroke-width="9" stroke-linejoin="round" stroke-linecap="round"/><path d="M470 320 L470 460 L530 460" fill="none" stroke="#a3a3a3" stroke-width="9" stroke-linejoin="round" stroke-linecap="round"/><path d="M530 420 Q530 390 580 390 Q635 390 635 420 L635 500 Q600 520 540 500 Z" fill="none" stroke="#a3a3a3" stroke-width="9" stroke-linejoin="round" stroke-linecap="round"/><path d="M395 610 Q400 530 490 525 Q600 530 610 600 Q615 660 560 700 L530 780 L520 960 L420 960 L410 800 Q400 700 395 610 Z" fill="none" stroke="#a3a3a3" stroke-width="9" stroke-linejoin="round" stroke-linecap="round"/><path d="M190 700 Q400 800 560 900 Q700 1000 760 1200 L780 1480" fill="none" stroke="#a3a3a3" stroke-width="9" stroke-linejoin="round" stroke-linecap="round"/><path d="M210 680 Q430 780 590 880 Q740 990 820 1200 L830 1480" fill="none" stroke="#a3a3a3" stroke-width="9" stroke-linejoin="round" stroke-linecap="round"/><path d="M50 760 Q90 720 150 730 Q210 760 200 830 Q180 870 100 860 L50 840" fill="none" stroke="#a3a3a3" stroke-width="9" stroke-linejoin="round" stroke-linecap="round"/><path d="M50 920 L130 1180 L560 1490" fill="none" stroke="#a3a3a3" stroke-width="9" stroke-linejoin="round" stroke-linecap="round"/><path d="M95 940 L160 1200 L570 1480" fill="none" stroke="#a3a3a3" stroke-width="9" stroke-linejoin="round" stroke-linecap="round"/><path d="M120 900 L200 1200 L600 1480" fill="none" stroke="#a3a3a3" stroke-width="9" stroke-linejoin="round" stroke-linecap="round"/><path d="M90 560 Q100 490 170 470 L520 470" fill="none" stroke="#a3a3a3" stroke-width="9" stroke-linejoin="round" stroke-linecap="round"/><path d="M120 620 Q130 520 190 500 L530 500 L540 560 L640 560" fill="none" stroke="#a3a3a3" stroke-width="9" stroke-linejoin="round" stroke-linecap="round"/><path d="M760 740 Q770 700 820 705 L1589 695" fill="none" stroke="#a3a3a3" stroke-width="9" stroke-linejoin="round" stroke-linecap="round"/><path d="M840 415 L840 570 Q850 585 870 585 L1589 570" fill="none" stroke="#a3a3a3" stroke-width="9" stroke-linejoin="round" stroke-linecap="round"/><path d="M1030 610 L1030 715 L1135 715 L1135 610 Z" fill="none" stroke="#a3a3a3" stroke-width="9" stroke-linejoin="round" stroke-linecap="round"/><path d="M1250 650 Q1290 620 1320 650 L1320 690 L1250 690 Z" fill="none" stroke="#a3a3a3" stroke-width="9" stroke-linejoin="round" stroke-linecap="round"/><path d="M760 740 L870 1000 Q880 1060 940 1080 L1589 1060" fill="none" stroke="#a3a3a3" stroke-width="9" stroke-linejoin="round" stroke-linecap="round"/><path d="M940 1160 Q1010 1120 1090 1150 Q1105 1160 1120 1150 Q1190 1110 1270 1150 Q1285 1160 1300 1150 Q1370 1110 1450 1150 Q1465 1160 1480 1150 Q1530 1110 1589 1110" fill="none" stroke="#a3a3a3" stroke-width="9" stroke-linejoin="round" stroke-linecap="round"/><path d="M950 1180 L950 1270 Q1000 1300 1090 1290 L1090 1170" fill="none" stroke="#a3a3a3" stroke-width="9" stroke-linejoin="round" stroke-linecap="round"/><path d="M1120 1170 L1120 1290 Q1190 1305 1270 1290 L1270 1170" fill="none" stroke="#a3a3a3" stroke-width="9" stroke-linejoin="round" stroke-linecap="round"/><path d="M1300 1170 L1300 1290 Q1370 1305 1450 1280 L1450 1170" fill="none" stroke="#a3a3a3" stroke-width="9" stroke-linejoin="round" stroke-linecap="round"/><path d="M540 1490 Q900 1440 1250 1420 L1589 1410" fill="none" stroke="#a3a3a3" stroke-width="9" stroke-linejoin="round" stroke-linecap="round"/><path d="M840 1480 Q840 1330 900 1320 L1250 1340 Q1300 1350 1300 1400" fill="none" stroke="#a3a3a3" stroke-width="9" stroke-linejoin="round" stroke-linecap="round"/><path d="M640 1050 L640 1480" fill="none" stroke="#a3a3a3" stroke-width="9" stroke-linejoin="round" stroke-linecap="round"/><path d="M700 1050 L700 1480" fill="none" stroke="#a3a3a3" stroke-width="9" stroke-linejoin="round" stroke-linecap="round"/><path d="M560 1040 L560 1300 L420 1480" fill="none" stroke="#a3a3a3" stroke-width="9" stroke-linejoin="round" stroke-linecap="round"/><path d="M340 880 L700 1040" fill="none" stroke="#a3a3a3" stroke-width="9" stroke-linejoin="round" stroke-linecap="round"/><path d="M380 1040 L540 1000 L820 1010" fill="none" stroke="#a3a3a3" stroke-width="9" stroke-linejoin="round" stroke-linecap="round"/><path d="M1430 1200 Q1440 1170 1490 1170 L1589 1170" fill="none" stroke="#a3a3a3" stroke-width="9" stroke-linejoin="round" stroke-linecap="round"/><path d="M1440 1230 Q1450 1210 1500 1210 L1589 1210" fill="none" stroke="#a3a3a3" stroke-width="9" stroke-linejoin="round" stroke-linecap="round"/><path d="M230 760 L440 680" fill="none" stroke="#a3a3a3" stroke-width="9" stroke-linejoin="round" stroke-linecap="round"/><path d="M240 800 L440 720" fill="none" stroke="#a3a3a3" stroke-width="9" stroke-linejoin="round" stroke-linecap="round"/><path d="M250 840 L440 760" fill="none" stroke="#a3a3a3" stroke-width="9" stroke-linejoin="round" stroke-linecap="round"/><circle cx="485" cy="575" r="22" fill="none" stroke="#a3a3a3" stroke-width="9" stroke-linejoin="round" stroke-linecap="round"/><circle cx="1410" cy="625" r="65" fill="none" stroke="#a3a3a3" stroke-width="9" stroke-linejoin="round" stroke-linecap="round"/><circle cx="250" cy="1040" r="22" fill="none" stroke="#a3a3a3" stroke-width="9" stroke-linejoin="round" stroke-linecap="round"/><circle cx="290" cy="1000" r="22" fill="none" stroke="#a3a3a3" stroke-width="9" stroke-linejoin="round" stroke-linecap="round"/><circle cx="415" cy="1015" r="22" fill="none" stroke="#a3a3a3" stroke-width="9" stroke-linejoin="round" stroke-linecap="round"/><circle cx="485" cy="1015" r="22" fill="none" stroke="#a3a3a3" stroke-width="9" stroke-linejoin="round" stroke-linecap="round"/><circle cx="620" cy="960" r="30" fill="none" stroke="#a3a3a3" stroke-width="9" stroke-linejoin="round" stroke-linecap="round"/><circle cx="370" cy="890" r="22" fill="none" stroke="#a3a3a3" stroke-width="9" stroke-linejoin="round" stroke-linecap="round"/><circle cx="800" cy="670" r="25" fill="none" stroke="#a3a3a3" stroke-width="9" stroke-linejoin="round" stroke-linecap="round"/><circle cx="1285" cy="665" r="20" fill="none" stroke="#a3a3a3" stroke-width="9" stroke-linejoin="round" stroke-linecap="round"/><circle cx="930" cy="980" r="35" fill="none" stroke="#a3a3a3" stroke-width="9" stroke-linejoin="round" stroke-linecap="round"/><circle cx="100" cy="800" r="50" fill="none" stroke="#a3a3a3" stroke-width="9" stroke-linejoin="round" stroke-linecap="round"/><path d="M870 920 L1589 915" fill="none" stroke="#b5b5b5" stroke-width="4" stroke-linejoin="round"/><path d="M880 970 L1589 965" fill="none" stroke="#b5b5b5" stroke-width="4" stroke-linejoin="round"/><path d="M900 1025 L1589 1015" fill="none" stroke="#b5b5b5" stroke-width="4" stroke-linejoin="round"/><path d="M50 310 L470 310" fill="none" stroke="#b5b5b5" stroke-width="4" stroke-linejoin="round"/><path d="M600 1060 Q570 1200 610 1260" fill="none" stroke="#b5b5b5" stroke-width="4" stroke-linejoin="round"/></g><g transform="translate(882.8 366.9) scale(0.5628)"><path d="M700 640 Q650 780 600 880 Q500 1000 420 1070 Q340 1140 330 1260" fill="none" stroke="#a3a3a3" stroke-width="22" stroke-linejoin="round" stroke-linecap="round"/><path d="M700 640 Q650 780 600 880 Q500 1000 420 1070 Q340 1140 330 1260" fill="none" stroke="#ffffff" stroke-width="8" stroke-linejoin="round" stroke-linecap="round"/><path d="M300 650 L420 650 Q470 670 480 740 L510 1050 L520 1400" fill="none" stroke="#a3a3a3" stroke-width="22" stroke-linejoin="round" stroke-linecap="round"/><path d="M300 650 L420 650 Q470 670 480 740 L510 1050 L520 1400" fill="none" stroke="#ffffff" stroke-width="8" stroke-linejoin="round" stroke-linecap="round"/><path d="M1260 300 L1270 400 Q1200 450 1210 560 Q1240 740 1360 820 Q1410 920 1400 1110 Q1380 1300 1280 1420" fill="none" stroke="#a3a3a3" stroke-width="22" stroke-linejoin="round" stroke-linecap="round"/><path d="M1260 300 L1270 400 Q1200 450 1210 560 Q1240 740 1360 820 Q1410 920 1400 1110 Q1380 1300 1280 1420" fill="none" stroke="#ffffff" stroke-width="8" stroke-linejoin="round" stroke-linecap="round"/><path d="M1160 880 Q1300 900 1490 1010" fill="none" stroke="#a3a3a3" stroke-width="22" stroke-linejoin="round" stroke-linecap="round"/><path d="M1160 880 Q1300 900 1490 1010" fill="none" stroke="#ffffff" stroke-width="8" stroke-linejoin="round" stroke-linecap="round"/><path d="M920 1120 Q1100 1020 1300 1150 Q1420 1240 1490 1300" fill="none" stroke="#a3a3a3" stroke-width="22" stroke-linejoin="round" stroke-linecap="round"/><path d="M920 1120 Q1100 1020 1300 1150 Q1420 1240 1490 1300" fill="none" stroke="#ffffff" stroke-width="8" stroke-linejoin="round" stroke-linecap="round"/><path d="M0 480 Q300 470 600 445 Q1000 400 1250 320 Q1350 295 1500 298" fill="none" stroke="#a3a3a3" stroke-width="9" stroke-linejoin="round" stroke-linecap="round"/><path d="M0 575 L280 570 L290 520 L360 520 L380 540 L420 540 L430 580" fill="none" stroke="#a3a3a3" stroke-width="9" stroke-linejoin="round" stroke-linecap="round"/><path d="M0 690 L280 690" fill="none" stroke="#a3a3a3" stroke-width="9" stroke-linejoin="round" stroke-linecap="round"/><path d="M0 1060 L150 1060 Q260 1000 280 800 L280 690" fill="none" stroke="#a3a3a3" stroke-width="9" stroke-linejoin="round" stroke-linecap="round"/><path d="M290 640 L440 640 Q480 650 490 700 L520 1000 L530 1400" fill="none" stroke="#a3a3a3" stroke-width="9" stroke-linejoin="round" stroke-linecap="round"/><path d="M300 660 L400 660 Q450 690 460 760 L480 1050 L500 1400" fill="none" stroke="#a3a3a3" stroke-width="9" stroke-linejoin="round" stroke-linecap="round"/><path d="M300 690 L360 690 Q410 730 420 800 L440 1100 L470 1400" fill="none" stroke="#a3a3a3" stroke-width="9" stroke-linejoin="round" stroke-linecap="round"/><path d="M590 460 Q640 580 720 600" fill="none" stroke="#a3a3a3" stroke-width="9" stroke-linejoin="round" stroke-linecap="round"/><path d="M1030 380 L1060 520 L1150 520 L1150 440 L1060 430" fill="none" stroke="#a3a3a3" stroke-width="9" stroke-linejoin="round" stroke-linecap="round"/><path d="M740 650 Q760 570 850 560 Q950 560 970 650 L970 780 Q960 850 870 920 L640 1060" fill="none" stroke="#a3a3a3" stroke-width="9" stroke-linejoin="round" stroke-linecap="round"/><path d="M740 780 Q760 720 850 715 Q950 720 970 780" fill="none" stroke="#a3a3a3" stroke-width="9" stroke-linejoin="round" stroke-linecap="round"/><path d="M740 650 L740 820 L620 960" fill="none" stroke="#a3a3a3" stroke-width="9" stroke-linejoin="round" stroke-linecap="round"/><path d="M500 1080 Q580 1000 620 970 Q700 1040 780 1120 Q720 1200 660 1250 Q580 1180 500 1080 Z" fill="none" stroke="#a3a3a3" stroke-width="9" stroke-linejoin="round" stroke-linecap="round"/><path d="M540 1050 Q660 1090 720 1200" fill="none" stroke="#a3a3a3" stroke-width="9" stroke-linejoin="round" stroke-linecap="round"/><path d="M570 1020 Q690 1060 750 1160" fill="none" stroke="#a3a3a3" stroke-width="9" stroke-linejoin="round" stroke-linecap="round"/><path d="M600 990 Q720 1030 770 1130" fill="none" stroke="#a3a3a3" stroke-width="9" stroke-linejoin="round" stroke-linecap="round"/><path d="M690 680 Q640 800 600 900 Q500 1000 420 1060 Q340 1120 330 1250" fill="none" stroke="#a3a3a3" stroke-width="9" stroke-linejoin="round" stroke-linecap="round"/><path d="M710 690 Q660 810 620 910 Q520 1020 440 1080 Q360 1140 350 1260" fill="none" stroke="#a3a3a3" stroke-width="9" stroke-linejoin="round" stroke-linecap="round"/><path d="M1030 650 Q1040 620 1080 625 L1490 860 L1490 1380 L1100 1420 Q760 1350 760 1300 L760 1200 Z" fill="none" stroke="#a3a3a3" stroke-width="9" stroke-linejoin="round" stroke-linecap="round"/><path d="M940 1000 L980 990 L1430 1240" fill="none" stroke="#a3a3a3" stroke-width="9" stroke-linejoin="round" stroke-linecap="round"/><path d="M870 1100 L1000 1050 L1130 1200 L1050 1340 L960 1270 Z" fill="none" stroke="#a3a3a3" stroke-width="9" stroke-linejoin="round" stroke-linecap="round"/><path d="M1100 850 Q1130 830 1160 850 L1490 1000" fill="none" stroke="#a3a3a3" stroke-width="9" stroke-linejoin="round" stroke-linecap="round"/><path d="M1180 420 Q1220 380 1290 370 L1300 290 Q1320 270 1330 300 L1330 380 Q1250 420 1240 480 Q1240 700 1350 800 Q1420 900 1420 1100 Q1400 1300 1300 1420" fill="none" stroke="#a3a3a3" stroke-width="9" stroke-linejoin="round" stroke-linecap="round"/><path d="M1200 440 Q1180 600 1300 780 Q1390 900 1390 1100 Q1370 1300 1270 1420" fill="none" stroke="#a3a3a3" stroke-width="9" stroke-linejoin="round" stroke-linecap="round"/><path d="M1230 430 L1490 430 L1490 720 L1280 690 Q1250 600 1230 430 Z" fill="none" stroke="#a3a3a3" stroke-width="9" stroke-linejoin="round" stroke-linecap="round"/><path d="M0 1415 Q500 1410 1000 1420 Q1300 1430 1490 1370" fill="none" stroke="#a3a3a3" stroke-width="9" stroke-linejoin="round" stroke-linecap="round"/><path d="M60 1330 L180 1340 L190 1400 L70 1400 Z" fill="none" stroke="#a3a3a3" stroke-width="9" stroke-linejoin="round" stroke-linecap="round"/><path d="M130 1240 L230 1220 L300 1280 L280 1340 L200 1320 Z" fill="none" stroke="#a3a3a3" stroke-width="9" stroke-linejoin="round" stroke-linecap="round"/><path d="M0 1120 Q200 1110 260 1160" fill="none" stroke="#a3a3a3" stroke-width="9" stroke-linejoin="round" stroke-linecap="round"/><path d="M0 1210 Q200 1200 280 1240" fill="none" stroke="#a3a3a3" stroke-width="9" stroke-linejoin="round" stroke-linecap="round"/><path d="M1490 940 L1400 1200 L1200 1420" fill="none" stroke="#a3a3a3" stroke-width="9" stroke-linejoin="round" stroke-linecap="round"/><path d="M1000 1060 Q1300 1000 1490 1100" fill="none" stroke="#a3a3a3" stroke-width="9" stroke-linejoin="round" stroke-linecap="round"/><circle cx="210" cy="660" r="25" fill="none" stroke="#a3a3a3" stroke-width="9" stroke-linejoin="round" stroke-linecap="round"/><circle cx="85" cy="965" r="35" fill="none" stroke="#a3a3a3" stroke-width="9" stroke-linejoin="round" stroke-linecap="round"/><circle cx="1160" cy="900" r="25" fill="none" stroke="#a3a3a3" stroke-width="9" stroke-linejoin="round" stroke-linecap="round"/></g><rect x="355" y="303" width="45" height="42" fill="#fff" stroke="#000" stroke-width="3.4"/><text x="377.5" y="338" text-anchor="middle" font-family="Liberation Mono" font-size="38" fill="#000">1</text><rect x="441" y="303" width="45" height="42" fill="#fff" stroke="#000" stroke-width="3.4"/><text x="463.5" y="338" text-anchor="middle" font-family="Liberation Mono" font-size="38" fill="#000">3</text><rect x="683" y="303" width="58" height="42" fill="#fff" stroke="#000" stroke-width="3.4"/><text x="712.0" y="338" text-anchor="middle" font-family="Liberation Mono" font-size="38" fill="#000">13</text><rect x="929" y="303" width="57" height="42" fill="#fff" stroke="#000" stroke-width="3.4"/><text x="957.5" y="338" text-anchor="middle" font-family="Liberation Mono" font-size="38" fill="#000">12</text><rect x="998" y="303" width="45" height="42" fill="#fff" stroke="#000" stroke-width="3.4"/><text x="1020.5" y="338" text-anchor="middle" font-family="Liberation Mono" font-size="38" fill="#000">5</text><rect x="1160" y="303" width="45" height="42" fill="#fff" stroke="#000" stroke-width="3.4"/><text x="1182.5" y="338" text-anchor="middle" font-family="Liberation Mono" font-size="38" fill="#000">4</text><rect x="1314" y="303" width="113" height="42" fill="#fff" stroke="#000" stroke-width="3.4"/><text x="1342.25" y="338" text-anchor="middle" font-family="Liberation Mono" font-size="38" fill="#000">16</text><line x1="1370.5" y1="303" x2="1370.5" y2="345" stroke="#000" stroke-width="3.4" fill="none"/><text x="1398.75" y="338" text-anchor="middle" font-family="Liberation Mono" font-size="38" fill="#000">19</text><rect x="1553" y="303" width="58" height="42" fill="#fff" stroke="#000" stroke-width="3.4"/><text x="1582.0" y="338" text-anchor="middle" font-family="Liberation Mono" font-size="38" fill="#000">14</text><rect x="1648" y="303" width="58" height="42" fill="#fff" stroke="#000" stroke-width="3.4"/><text x="1677.0" y="338" text-anchor="middle" font-family="Liberation Mono" font-size="38" fill="#000">21</text><rect x="1711" y="303" width="30" height="42" fill="#fff" stroke="#000" stroke-width="3.4"/><rect x="379" y="1298" width="45" height="42" fill="#fff" stroke="#000" stroke-width="3.4"/><text x="401.5" y="1333" text-anchor="middle" font-family="Liberation Mono" font-size="38" fill="#000">2</text><rect x="509" y="1298" width="45" height="42" fill="#fff" stroke="#000" stroke-width="3.4"/><text x="531.5" y="1333" text-anchor="middle" font-family="Liberation Mono" font-size="38" fill="#000">6</text><rect x="603" y="1298" width="58" height="42" fill="#fff" stroke="#000" stroke-width="3.4"/><text x="632.0" y="1333" text-anchor="middle" font-family="Liberation Mono" font-size="38" fill="#000">17</text><rect x="706" y="1298" width="58" height="42" fill="#fff" stroke="#000" stroke-width="3.4"/><text x="735.0" y="1333" text-anchor="middle" font-family="Liberation Mono" font-size="38" fill="#000">15</text><rect x="804" y="1298" width="58" height="42" fill="#fff" stroke="#000" stroke-width="3.4"/><text x="833.0" y="1333" text-anchor="middle" font-family="Liberation Mono" font-size="38" fill="#000">18</text><rect x="874" y="1298" width="58" height="42" fill="#fff" stroke="#000" stroke-width="3.4"/><text x="903.0" y="1333" text-anchor="middle" font-family="Liberation Mono" font-size="38" fill="#000">10</text><rect x="948" y="1298" width="168" height="42" fill="#fff" stroke="#000" stroke-width="3.4"/><text x="976.0" y="1333" text-anchor="middle" font-family="Liberation Mono" font-size="38" fill="#000">20</text><line x1="1004.0" y1="1298" x2="1004.0" y2="1340" stroke="#000" stroke-width="3.4" fill="none"/><text x="1032.0" y="1333" text-anchor="middle" font-family="Liberation Mono" font-size="38" fill="#000">22</text><line x1="1060.0" y1="1298" x2="1060.0" y2="1340" stroke="#000" stroke-width="3.4" fill="none"/><text x="1088.0" y="1333" text-anchor="middle" font-family="Liberation Mono" font-size="38" fill="#000">23</text><rect x="1166" y="1298" width="58" height="42" fill="#fff" stroke="#000" stroke-width="3.4"/><text x="1195.0" y="1333" text-anchor="middle" font-family="Liberation Mono" font-size="38" fill="#000">11</text><rect x="1678" y="1298" width="45" height="42" fill="#fff" stroke="#000" stroke-width="3.4"/><text x="1700.5" y="1333" text-anchor="middle" font-family="Liberation Mono" font-size="38" fill="#000">9</text><path d="M378 345 L378 697 L428 698" stroke="#000" stroke-width="3.4" fill="none"/><path d="M463 345 L463 676" stroke="#000" stroke-width="3.4" fill="none"/><path d="M711 345 L711 592 M528 592 L882 592 M528 592 L528 662 M647 592 L647 662 M764 592 L764 662 M882 592 L882 662" stroke="#000" stroke-width="3.4" fill="none"/><path d="M1020 345 L1020 772" stroke="#000" stroke-width="3.4" fill="none"/><path d="M1370 345 L1370 728" stroke="#000" stroke-width="3.4" fill="none"/><path d="M1582 345 L1582 678 L1636 680" stroke="#000" stroke-width="3.4" fill="none"/><path d="M1678 345 L1678 687 L1695 688" stroke="#000" stroke-width="3.4" fill="none"/><path d="M402 1298 L404 803" stroke="#000" stroke-width="3.4" fill="none"/><path d="M735 1298 L735 903 M527 903 L932 903 M527 903 L527 839 M662 903 L662 839 M796 903 L796 839 M930 903 L930 839" stroke="#000" stroke-width="3.4" fill="none"/><path d="M832 1298 L832 1071" stroke="#000" stroke-width="3.4" fill="none"/><path d="M903 1298 L903 1000 L1022 1000" stroke="#000" stroke-width="3.4" fill="none"/><path d="M1032 1298 L1032 1103" stroke="#000" stroke-width="3.4" fill="none"/><path d="M1700 1298 L1700 946" stroke="#000" stroke-width="3.4" fill="none"/><path d="M957 345 L957 693" stroke="#000" stroke-width="3.4" fill="none" stroke-dasharray="9 6"/><path d="M1183 345 L1183 857 L992 857" stroke="#000" stroke-width="3.4" fill="none" stroke-dasharray="9 6"/><path d="M532 1298 L532 1079" stroke="#000" stroke-width="3.4" fill="none" stroke-dasharray="9 6"/><path d="M634 1298 L634 1078" stroke="#000" stroke-width="3.4" fill="none" stroke-dasharray="9 6"/><path d="M1195 1298 L1195 1197" stroke="#000" stroke-width="3.4" fill="none" stroke-dasharray="9 6"/><circle cx="428" cy="698" r="10.5" fill="#000"/><circle cx="463" cy="676" r="10.5" fill="#000"/><circle cx="528" cy="662" r="10.5" fill="#000"/><circle cx="647" cy="662" r="10.5" fill="#000"/><circle cx="764" cy="662" r="10.5" fill="#000"/><circle cx="882" cy="662" r="10.5" fill="#000"/><circle cx="957" cy="693" r="10.5" fill="#000"/><circle cx="1020" cy="772" r="10.5" fill="#000"/><circle cx="992" cy="857" r="10.5" fill="#000"/><circle cx="1360" cy="728" r="10.5" fill="#000"/><circle cx="1381" cy="728" r="10.5" fill="#000"/><circle cx="1636" cy="680" r="10.5" fill="#000"/><circle cx="1695" cy="688" r="10.5" fill="#000"/><circle cx="404" cy="803" r="10.5" fill="#000"/><circle cx="532" cy="1079" r="10.5" fill="#000"/><circle cx="634" cy="1078" r="10.5" fill="#000"/><circle cx="527" cy="839" r="10.5" fill="#000"/><circle cx="662" cy="839" r="10.5" fill="#000"/><circle cx="796" cy="839" r="10.5" fill="#000"/><circle cx="930" cy="839" r="10.5" fill="#000"/><circle cx="832" cy="1071" r="10.5" fill="#000"/><circle cx="1022" cy="1000" r="10.5" fill="#000"/><circle cx="1020" cy="1120" r="10.5" fill="#000"/><circle cx="1040" cy="1120" r="10.5" fill="#000"/><circle cx="1032" cy="1103" r="10.5" fill="#000"/><circle cx="1195" cy="1197" r="10.5" fill="#000"/><circle cx="1700" cy="946" r="10.5" fill="#000"/><text x="268" y="1238" font-family="Liberation Serif" font-weight="700" font-size="19" fill="#111">AB9 3622</text></g></svg>
<div class="zb" style="left:2183.4px;top:970.6px"><svg width="70" height="70" viewBox="0 0 70 70"><circle cx="30" cy="32" r="16.4" fill="none" stroke="#474240" stroke-width="3.7"/><rect x="20.5" y="30.4" width="19.2" height="3.2" fill="#474240"/><rect x="28.4" y="22.4" width="3.2" height="19.2" fill="#474240"/><path d="M41.5 45.2 L45.8 40.8 L56.6 51.4 L52.3 55.8 Z" fill="#474240"/></svg></div>
<div class="zb" style="left:2885.2px;top:968.1px"><svg width="70" height="70" viewBox="0 0 70 70"><circle cx="30" cy="32" r="16.4" fill="none" stroke="#474240" stroke-width="3.7"/><rect x="20.5" y="30.4" width="19.2" height="3.2" fill="#474240"/><rect x="28.4" y="22.4" width="3.2" height="19.2" fill="#474240"/><path d="M41.5 45.2 L45.8 40.8 L56.6 51.4 L52.3 55.8 Z" fill="#474240"/></svg></div>
<div class="zb" style="left:3780.8px;top:972.2px"><svg width="70" height="70" viewBox="0 0 70 70"><circle cx="30" cy="32" r="16.4" fill="none" stroke="#474240" stroke-width="3.7"/><rect x="20.5" y="30.4" width="19.2" height="3.2" fill="#474240"/><rect x="28.4" y="22.4" width="3.2" height="19.2" fill="#474240"/><path d="M41.5 45.2 L45.8 40.8 L56.6 51.4 L52.3 55.8 Z" fill="#474240"/></svg></div>
<div class="zb" style="left:2183.5px;top:2006px"><svg width="70" height="70" viewBox="0 0 70 70"><circle cx="30" cy="32" r="16.4" fill="none" stroke="#474240" stroke-width="3.7"/><rect x="20.5" y="30.4" width="19.2" height="3.2" fill="#474240"/><rect x="28.4" y="22.4" width="3.2" height="19.2" fill="#474240"/><path d="M41.5 45.2 L45.8 40.8 L56.6 51.4 L52.3 55.8 Z" fill="#474240"/></svg></div>
<div class="zb" style="left:2885.2px;top:2006.1px"><svg width="70" height="70" viewBox="0 0 70 70"><circle cx="30" cy="32" r="16.4" fill="none" stroke="#474240" stroke-width="3.7"/><rect x="20.5" y="30.4" width="19.2" height="3.2" fill="#474240"/><rect x="28.4" y="22.4" width="3.2" height="19.2" fill="#474240"/><path d="M41.5 45.2 L45.8 40.8 L56.6 51.4 L52.3 55.8 Z" fill="#474240"/></svg></div>
<div class="zb" style="left:3787.7px;top:2006.1px"><svg width="70" height="70" viewBox="0 0 70 70"><circle cx="30" cy="32" r="16.4" fill="none" stroke="#474240" stroke-width="3.7"/><rect x="20.5" y="30.4" width="19.2" height="3.2" fill="#474240"/><rect x="28.4" y="22.4" width="3.2" height="19.2" fill="#474240"/><path d="M41.5 45.2 L45.8 40.8 L56.6 51.4 L52.3 55.8 Z" fill="#474240"/></svg></div>
<div class="abs" style="left:2261px;top:2941px;width:2px;height:59px;background:#8a8a8a"></div>
<div class="abs" style="left:2622px;top:2941px;width:2px;height:59px;background:#8a8a8a"></div>
<div class="abs" style="left:2682.4px;top:2956.4px;width:29.2px;height:29.2px;border-radius:50%;background:#3fa535"></div>
<span class="t" id="user" style="left:3470.50px;top:30.17px;font-size:37px;color:#8c8c8c;letter-spacing:0.264px;">autodata.user-123456</span>
<span class="t" id="sup" style="left:3954.00px;top:30.27px;font-size:37px;color:#e9e9e9;letter-spacing:0.115px;">Support</span>
<span class="t" id="set" style="left:4177.80px;top:30.27px;font-size:37px;color:#e9e9e9;letter-spacing:0.401px;">Settings</span>
<span class="t" id="log" style="left:4418.80px;top:30.27px;font-size:37px;color:#e9e9e9;letter-spacing:0.522px;">Logout</span>
<span class="t" id="home" style="left:1039.00px;top:167.55px;font-size:46px;color:#ffffff;letter-spacing:0.293px;">Home</span>
<span class="t" id="tech" style="left:1386.00px;top:167.55px;font-size:46px;color:#ffffff;letter-spacing:0.774px;">Technical information</span>
<span class="t" id="est" style="left:2052.00px;top:167.55px;font-size:46px;color:#ffffff;letter-spacing:0.240px;">Estimate calculator</span>
<span class="t" id="honda" style="left:3532.00px;top:140.55px;font-size:46px;color:#000000;font-weight:700;transform:scaleX(0.8497);transform-origin:3.00px 0;">Honda</span>
<span class="t" id="civic" style="left:3533.00px;top:202.35px;font-size:61px;color:#000000;font-weight:700;transform:scaleX(0.8644);transform-origin:2.00px 0;">Civic</span>
<span class="t" id="type" style="left:3533.00px;top:274.44px;font-size:42px;color:#8a8a8a;transform:scaleX(0.9611);transform-origin:2.00px 0;">2.0 Type R</span>
<span class="t" id="chg" style="left:4190.80px;top:229.37px;font-size:37px;color:#ffffff;letter-spacing:-0.191px;">Change vehicle</span>
<span class="t" id="title" style="left:135.00px;top:485.33px;font-size:100px;color:#000000;letter-spacing:0.735px;">Electrical component locations</span>
<span class="t" id="sb1" style="left:224.00px;top:814.43px;font-size:55px;color:#000000;font-weight:700;transform:scaleX(0.9247);transform-origin:1.00px 0;">Air conditioning</span>
<span class="t" id="sb2" style="left:222.00px;top:907.73px;font-size:55px;color:#0b6bb4;letter-spacing:0.090px;">Electrical component locations</span>
<span class="t" id="sb3" style="left:222.00px;top:1000.43px;font-size:55px;color:#0b6bb4;letter-spacing:-0.671px;">Fuse boxes/Relay plates</span>
<span class="t" id="sb4" style="left:222.00px;top:1093.73px;font-size:55px;color:#0b6bb4;letter-spacing:-0.705px;">Engine management</span>
<span class="t" id="h1" style="left:1565.00px;top:732.12px;font-size:66px;color:#000000;letter-spacing:0.829px;">Air conditioning</span>
<span class="t" id="h2" style="left:3051.00px;top:731.12px;font-size:66px;color:#000000;letter-spacing:0.881px;">Electrical component locations</span>
<span class="t" id="h3" style="left:1560.00px;top:1767.12px;font-size:66px;color:#000000;letter-spacing:0.059px;">Fuse boxes/Relay plates</span>
<span class="t" id="h4" style="left:3052.00px;top:1765.12px;font-size:66px;color:#000000;letter-spacing:-0.022px;">Engine management</span>
<span class="t" id="copy" style="left:1918.00px;top:2887.98px;font-size:39px;color:#959595;letter-spacing:-0.688px;">© Copyright and database rights: Autodata Limited 1974-2017.</span>
<span class="t" id="f1" style="left:1864.30px;top:2954.43px;font-size:38px;color:#0b6bb4;letter-spacing:0.023px;">Terms and conditions</span>
<span class="t" id="f2" style="left:2311.40px;top:2954.43px;font-size:38px;color:#0b6bb4;letter-spacing:-0.190px;">Copyright notice</span>
<span class="t" id="f3" style="left:2734.50px;top:2954.43px;font-size:38px;color:#0b6bb4;letter-spacing:0.098px;">Application status</span>
</body></html>
